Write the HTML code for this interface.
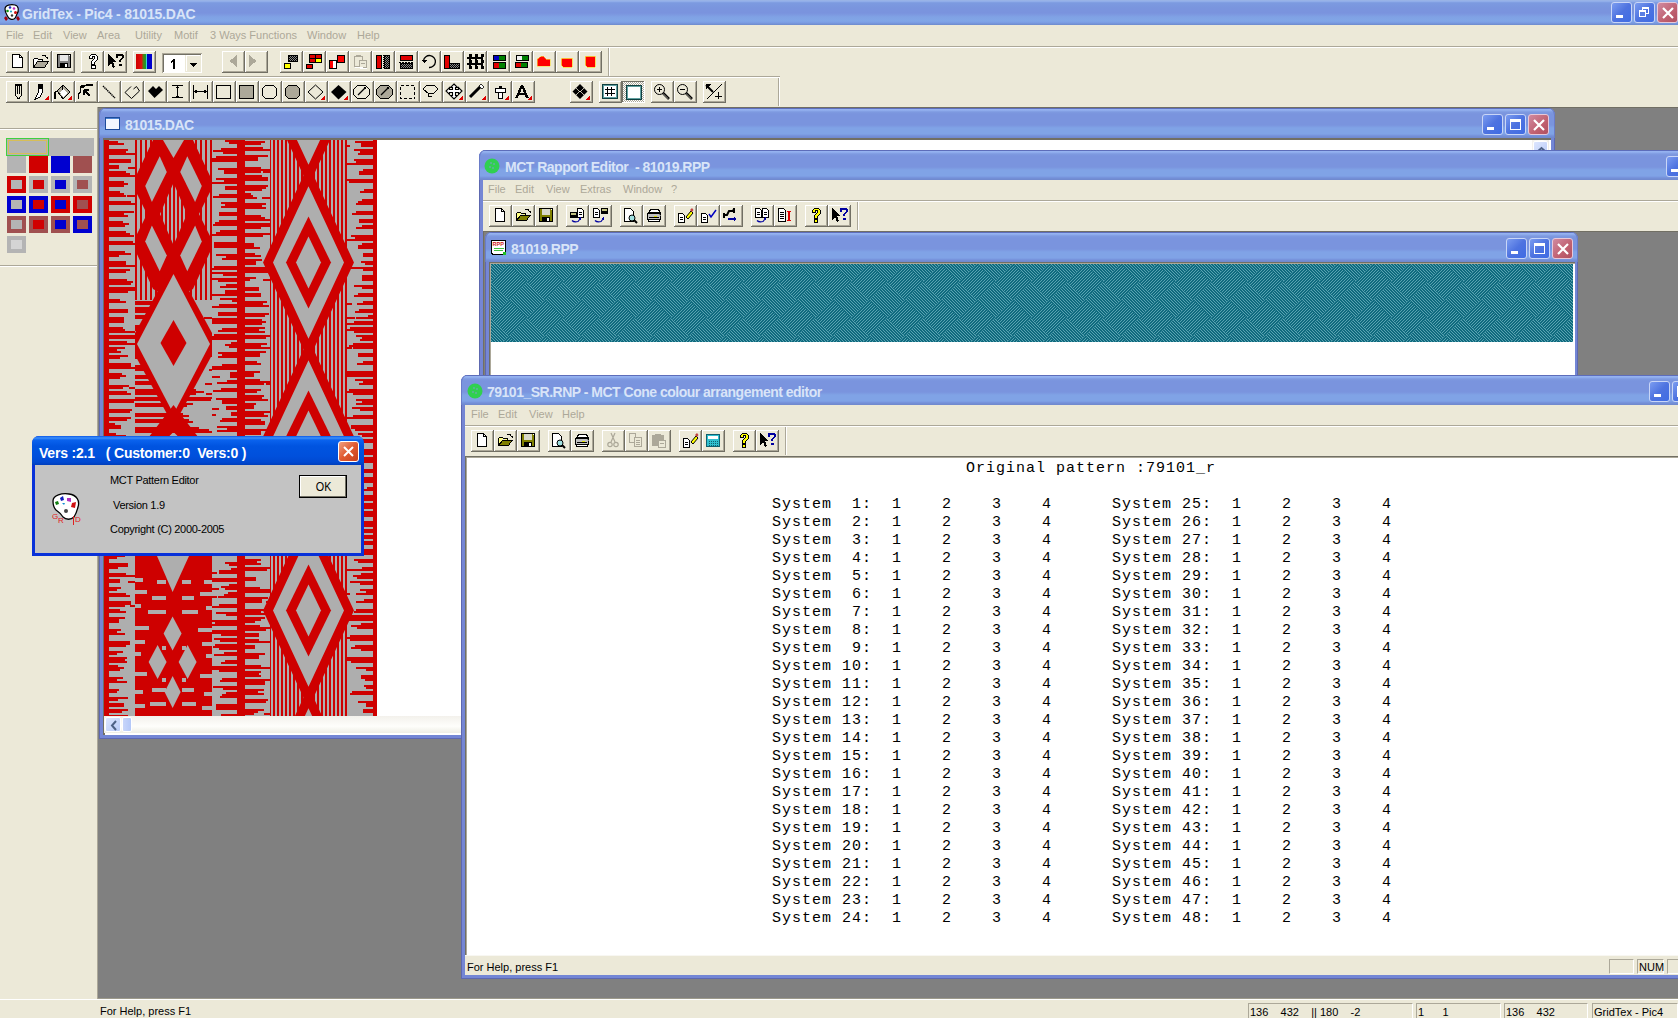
<!DOCTYPE html><html><head><meta charset="utf-8"><style>
*{box-sizing:border-box;margin:0;padding:0}
html,body{width:1678px;height:1018px;overflow:hidden;background:#ECE9D8;font-family:"Liberation Sans",sans-serif;position:relative}
.a{position:absolute}
.tb{position:absolute;background:linear-gradient(#96B0E0 0px,#9BB6EE 1px,#86A4E4 2px,#7C9AE0 3px,#7A95DE 8px,#7A93DE 13px,#80A2E5 17px,#81A6E7 21px,#7A9BE2 23px,#7391D4 24px,#6E8CCE 25px)}
.ttl{position:absolute;color:#D8E4F8;font-weight:bold;font-size:14px;white-space:nowrap;letter-spacing:-0.2px}
.menu{position:absolute;color:#ACA899;font-size:11px;white-space:nowrap}
.xb{position:absolute;width:21px;height:21px;border-radius:3px;border:1px solid #C9D6F7;background:linear-gradient(135deg,#7B9CF0 0%,#4E73E0 50%,#3F6CE4 100%)}
.xb.cl{border-color:#E8C8D8;background:linear-gradient(135deg,#D08AA0 0%,#C06070 60%,#B05060 100%)}
.btn{position:absolute;width:23px;height:22px;background:#ECE9D8;border-top:1px solid #FFF;border-left:1px solid #FFF;border-right:1px solid #716F64;border-bottom:1px solid #716F64;box-shadow:inset -1px -1px 0 #ACA899}
.btn svg{position:absolute;left:3px;top:2px}
.sep{position:absolute;height:2px;border-top:1px solid #ACA899;border-bottom:1px solid #FFF}
.vsep{position:absolute;width:2px;border-left:1px solid #ACA899;border-right:1px solid #FFF}
.mono{position:absolute;font-family:"Liberation Mono",monospace;font-size:15px;white-space:pre;color:#000;letter-spacing:1px;line-height:18px}
.st{position:absolute;font-size:11px;color:#000;white-space:nowrap}
.cell{position:absolute;border-top:1px solid #ACA899;border-left:1px solid #ACA899;border-right:1px solid #FFF;border-bottom:1px solid #FFF}
.frame{position:absolute;background:#7386D8}
</style></head><body>
<div class="tb" style="left:0;top:0;width:1678px;height:25px"></div>
<div class="ttl" style="left:22px;top:6px">GridTex - Pic4 - 81015.DAC</div>
<div class="xb" style="left:1611px;top:2px"><div class="a" style="left:4px;top:12px;width:7px;height:3px;background:#fff"></div></div>
<div class="xb" style="left:1634px;top:2px"><div class="a" style="left:7px;top:4px;width:7px;height:7px;border:1px solid #fff;border-top-width:2px"></div><div class="a" style="left:4px;top:7px;width:7px;height:7px;border:1px solid #fff;border-top-width:2px;background:#5A7FE4"></div></div>
<div class="xb cl" style="left:1657px;top:2px"><svg class="a" style="left:3px;top:3px" width="14" height="14"><path d="M2 2L12 12M12 2L2 12" stroke="#fff" stroke-width="2.2"/></svg></div>
<div class="menu" style="left:6px;top:29px">File</div>
<div class="menu" style="left:33px;top:29px">Edit</div>
<div class="menu" style="left:63px;top:29px">View</div>
<div class="menu" style="left:97px;top:29px">Area</div>
<div class="menu" style="left:135px;top:29px">Utility</div>
<div class="menu" style="left:174px;top:29px">Motif</div>
<div class="menu" style="left:210px;top:29px">3 Ways Functions</div>
<div class="menu" style="left:307px;top:29px">Window</div>
<div class="menu" style="left:357px;top:29px">Help</div>
<div class="sep" style="left:0;top:46px;width:1678px"></div>
<div class="sep" style="left:0;top:76px;width:780px"></div>
<div class="vsep" style="left:608px;top:48px;height:28px"></div>
<div class="vsep" style="left:778px;top:78px;height:28px"></div>
<svg class="a" style="left:0;top:0" width="800" height="108" shape-rendering="crispEdges">
<defs><pattern id="chk" width="2" height="2" patternUnits="userSpaceOnUse"><rect width="2" height="2" fill="#000"/><rect width="1" height="1" fill="#888"/><rect x="1" y="1" width="1" height="1" fill="#888"/></pattern><pattern id="chk2" width="2" height="2" patternUnits="userSpaceOnUse"><rect width="2" height="2" fill="#fff"/><rect width="1" height="1" fill="#ACA899"/><rect x="1" y="1" width="1" height="1" fill="#ACA899"/></pattern></defs>
<rect x="6" y="51" width="23" height="22" fill="#716F64"/><rect x="6" y="51" width="22" height="21" fill="#FFF"/><rect x="7" y="52" width="21" height="20" fill="#ACA899"/><rect x="7" y="52" width="20" height="19" fill="#ECE9D8"/>
<rect x="29" y="51" width="23" height="22" fill="#716F64"/><rect x="29" y="51" width="22" height="21" fill="#FFF"/><rect x="30" y="52" width="21" height="20" fill="#ACA899"/><rect x="30" y="52" width="20" height="19" fill="#ECE9D8"/>
<rect x="52" y="51" width="23" height="22" fill="#716F64"/><rect x="52" y="51" width="22" height="21" fill="#FFF"/><rect x="53" y="52" width="21" height="20" fill="#ACA899"/><rect x="53" y="52" width="20" height="19" fill="#ECE9D8"/>
<rect x="81" y="51" width="23" height="22" fill="#716F64"/><rect x="81" y="51" width="22" height="21" fill="#FFF"/><rect x="82" y="52" width="21" height="20" fill="#ACA899"/><rect x="82" y="52" width="20" height="19" fill="#ECE9D8"/>
<rect x="104" y="51" width="23" height="22" fill="#716F64"/><rect x="104" y="51" width="22" height="21" fill="#FFF"/><rect x="105" y="52" width="21" height="20" fill="#ACA899"/><rect x="105" y="52" width="20" height="19" fill="#ECE9D8"/>
<rect x="133" y="51" width="23" height="22" fill="#716F64"/><rect x="133" y="51" width="22" height="21" fill="#FFF"/><rect x="134" y="52" width="21" height="20" fill="#ACA899"/><rect x="134" y="52" width="20" height="19" fill="#ECE9D8"/>
<rect x="222" y="51" width="23" height="22" fill="#716F64"/><rect x="222" y="51" width="22" height="21" fill="#FFF"/><rect x="223" y="52" width="21" height="20" fill="#ACA899"/><rect x="223" y="52" width="20" height="19" fill="#ECE9D8"/>
<rect x="245" y="51" width="23" height="22" fill="#716F64"/><rect x="245" y="51" width="22" height="21" fill="#FFF"/><rect x="246" y="52" width="21" height="20" fill="#ACA899"/><rect x="246" y="52" width="20" height="19" fill="#ECE9D8"/>
<rect x="280" y="51" width="23" height="22" fill="#716F64"/><rect x="280" y="51" width="22" height="21" fill="#FFF"/><rect x="281" y="52" width="21" height="20" fill="#ACA899"/><rect x="281" y="52" width="20" height="19" fill="#ECE9D8"/>
<rect x="303" y="51" width="23" height="22" fill="#716F64"/><rect x="303" y="51" width="22" height="21" fill="#FFF"/><rect x="304" y="52" width="21" height="20" fill="#ACA899"/><rect x="304" y="52" width="20" height="19" fill="#ECE9D8"/>
<rect x="326" y="51" width="23" height="22" fill="#716F64"/><rect x="326" y="51" width="22" height="21" fill="#FFF"/><rect x="327" y="52" width="21" height="20" fill="#ACA899"/><rect x="327" y="52" width="20" height="19" fill="#ECE9D8"/>
<rect x="349" y="51" width="23" height="22" fill="#716F64"/><rect x="349" y="51" width="22" height="21" fill="#FFF"/><rect x="350" y="52" width="21" height="20" fill="#ACA899"/><rect x="350" y="52" width="20" height="19" fill="#ECE9D8"/>
<rect x="372" y="51" width="23" height="22" fill="#716F64"/><rect x="372" y="51" width="22" height="21" fill="#FFF"/><rect x="373" y="52" width="21" height="20" fill="#ACA899"/><rect x="373" y="52" width="20" height="19" fill="#ECE9D8"/>
<rect x="395" y="51" width="23" height="22" fill="#716F64"/><rect x="395" y="51" width="22" height="21" fill="#FFF"/><rect x="396" y="52" width="21" height="20" fill="#ACA899"/><rect x="396" y="52" width="20" height="19" fill="#ECE9D8"/>
<rect x="418" y="51" width="23" height="22" fill="#716F64"/><rect x="418" y="51" width="22" height="21" fill="#FFF"/><rect x="419" y="52" width="21" height="20" fill="#ACA899"/><rect x="419" y="52" width="20" height="19" fill="#ECE9D8"/>
<rect x="441" y="51" width="23" height="22" fill="#716F64"/><rect x="441" y="51" width="22" height="21" fill="#FFF"/><rect x="442" y="52" width="21" height="20" fill="#ACA899"/><rect x="442" y="52" width="20" height="19" fill="#ECE9D8"/>
<rect x="464" y="51" width="23" height="22" fill="#716F64"/><rect x="464" y="51" width="22" height="21" fill="#FFF"/><rect x="465" y="52" width="21" height="20" fill="#ACA899"/><rect x="465" y="52" width="20" height="19" fill="#ECE9D8"/>
<rect x="487" y="51" width="23" height="22" fill="#716F64"/><rect x="487" y="51" width="22" height="21" fill="#FFF"/><rect x="488" y="52" width="21" height="20" fill="#ACA899"/><rect x="488" y="52" width="20" height="19" fill="#ECE9D8"/>
<rect x="510" y="51" width="23" height="22" fill="#716F64"/><rect x="510" y="51" width="22" height="21" fill="#FFF"/><rect x="511" y="52" width="21" height="20" fill="#ACA899"/><rect x="511" y="52" width="20" height="19" fill="#ECE9D8"/>
<rect x="533" y="51" width="23" height="22" fill="#716F64"/><rect x="533" y="51" width="22" height="21" fill="#FFF"/><rect x="534" y="52" width="21" height="20" fill="#ACA899"/><rect x="534" y="52" width="20" height="19" fill="#ECE9D8"/>
<rect x="556" y="51" width="23" height="22" fill="#716F64"/><rect x="556" y="51" width="22" height="21" fill="#FFF"/><rect x="557" y="52" width="21" height="20" fill="#ACA899"/><rect x="557" y="52" width="20" height="19" fill="#ECE9D8"/>
<rect x="579" y="51" width="23" height="22" fill="#716F64"/><rect x="579" y="51" width="22" height="21" fill="#FFF"/><rect x="580" y="52" width="21" height="20" fill="#ACA899"/><rect x="580" y="52" width="20" height="19" fill="#ECE9D8"/>
<rect x="6" y="81" width="23" height="22" fill="#716F64"/><rect x="6" y="81" width="22" height="21" fill="#FFF"/><rect x="7" y="82" width="21" height="20" fill="#ACA899"/><rect x="7" y="82" width="20" height="19" fill="#ECE9D8"/>
<rect x="29" y="81" width="23" height="22" fill="#716F64"/><rect x="29" y="81" width="22" height="21" fill="#FFF"/><rect x="30" y="82" width="21" height="20" fill="#ACA899"/><rect x="30" y="82" width="20" height="19" fill="#ECE9D8"/>
<rect x="52" y="81" width="23" height="22" fill="#716F64"/><rect x="52" y="81" width="22" height="21" fill="#FFF"/><rect x="53" y="82" width="21" height="20" fill="#ACA899"/><rect x="53" y="82" width="20" height="19" fill="#ECE9D8"/>
<rect x="75" y="81" width="23" height="22" fill="#716F64"/><rect x="75" y="81" width="22" height="21" fill="#FFF"/><rect x="76" y="82" width="21" height="20" fill="#ACA899"/><rect x="76" y="82" width="20" height="19" fill="#ECE9D8"/>
<rect x="98" y="81" width="23" height="22" fill="#716F64"/><rect x="98" y="81" width="22" height="21" fill="#FFF"/><rect x="99" y="82" width="21" height="20" fill="#ACA899"/><rect x="99" y="82" width="20" height="19" fill="#ECE9D8"/>
<rect x="121" y="81" width="23" height="22" fill="#716F64"/><rect x="121" y="81" width="22" height="21" fill="#FFF"/><rect x="122" y="82" width="21" height="20" fill="#ACA899"/><rect x="122" y="82" width="20" height="19" fill="#ECE9D8"/>
<rect x="144" y="81" width="23" height="22" fill="#716F64"/><rect x="144" y="81" width="22" height="21" fill="#FFF"/><rect x="145" y="82" width="21" height="20" fill="#ACA899"/><rect x="145" y="82" width="20" height="19" fill="#ECE9D8"/>
<rect x="167" y="81" width="23" height="22" fill="#716F64"/><rect x="167" y="81" width="22" height="21" fill="#FFF"/><rect x="168" y="82" width="21" height="20" fill="#ACA899"/><rect x="168" y="82" width="20" height="19" fill="#ECE9D8"/>
<rect x="190" y="81" width="23" height="22" fill="#716F64"/><rect x="190" y="81" width="22" height="21" fill="#FFF"/><rect x="191" y="82" width="21" height="20" fill="#ACA899"/><rect x="191" y="82" width="20" height="19" fill="#ECE9D8"/>
<rect x="213" y="81" width="23" height="22" fill="#716F64"/><rect x="213" y="81" width="22" height="21" fill="#FFF"/><rect x="214" y="82" width="21" height="20" fill="#ACA899"/><rect x="214" y="82" width="20" height="19" fill="#ECE9D8"/>
<rect x="236" y="81" width="23" height="22" fill="#716F64"/><rect x="236" y="81" width="22" height="21" fill="#FFF"/><rect x="237" y="82" width="21" height="20" fill="#ACA899"/><rect x="237" y="82" width="20" height="19" fill="#ECE9D8"/>
<rect x="259" y="81" width="23" height="22" fill="#716F64"/><rect x="259" y="81" width="22" height="21" fill="#FFF"/><rect x="260" y="82" width="21" height="20" fill="#ACA899"/><rect x="260" y="82" width="20" height="19" fill="#ECE9D8"/>
<rect x="282" y="81" width="23" height="22" fill="#716F64"/><rect x="282" y="81" width="22" height="21" fill="#FFF"/><rect x="283" y="82" width="21" height="20" fill="#ACA899"/><rect x="283" y="82" width="20" height="19" fill="#ECE9D8"/>
<rect x="305" y="81" width="23" height="22" fill="#716F64"/><rect x="305" y="81" width="22" height="21" fill="#FFF"/><rect x="306" y="82" width="21" height="20" fill="#ACA899"/><rect x="306" y="82" width="20" height="19" fill="#ECE9D8"/>
<rect x="328" y="81" width="23" height="22" fill="#716F64"/><rect x="328" y="81" width="22" height="21" fill="#FFF"/><rect x="329" y="82" width="21" height="20" fill="#ACA899"/><rect x="329" y="82" width="20" height="19" fill="#ECE9D8"/>
<rect x="351" y="81" width="23" height="22" fill="#716F64"/><rect x="351" y="81" width="22" height="21" fill="#FFF"/><rect x="352" y="82" width="21" height="20" fill="#ACA899"/><rect x="352" y="82" width="20" height="19" fill="#ECE9D8"/>
<rect x="374" y="81" width="23" height="22" fill="#716F64"/><rect x="374" y="81" width="22" height="21" fill="#FFF"/><rect x="375" y="82" width="21" height="20" fill="#ACA899"/><rect x="375" y="82" width="20" height="19" fill="#ECE9D8"/>
<rect x="397" y="81" width="23" height="22" fill="#716F64"/><rect x="397" y="81" width="22" height="21" fill="#FFF"/><rect x="398" y="82" width="21" height="20" fill="#ACA899"/><rect x="398" y="82" width="20" height="19" fill="#ECE9D8"/>
<rect x="420" y="81" width="23" height="22" fill="#716F64"/><rect x="420" y="81" width="22" height="21" fill="#FFF"/><rect x="421" y="82" width="21" height="20" fill="#ACA899"/><rect x="421" y="82" width="20" height="19" fill="#ECE9D8"/>
<rect x="443" y="81" width="23" height="22" fill="#716F64"/><rect x="443" y="81" width="22" height="21" fill="#FFF"/><rect x="444" y="82" width="21" height="20" fill="#ACA899"/><rect x="444" y="82" width="20" height="19" fill="#ECE9D8"/>
<rect x="466" y="81" width="23" height="22" fill="#716F64"/><rect x="466" y="81" width="22" height="21" fill="#FFF"/><rect x="467" y="82" width="21" height="20" fill="#ACA899"/><rect x="467" y="82" width="20" height="19" fill="#ECE9D8"/>
<rect x="489" y="81" width="23" height="22" fill="#716F64"/><rect x="489" y="81" width="22" height="21" fill="#FFF"/><rect x="490" y="82" width="21" height="20" fill="#ACA899"/><rect x="490" y="82" width="20" height="19" fill="#ECE9D8"/>
<rect x="512" y="81" width="23" height="22" fill="#716F64"/><rect x="512" y="81" width="22" height="21" fill="#FFF"/><rect x="513" y="82" width="21" height="20" fill="#ACA899"/><rect x="513" y="82" width="20" height="19" fill="#ECE9D8"/>
<rect x="570" y="81" width="23" height="22" fill="#716F64"/><rect x="570" y="81" width="22" height="21" fill="#FFF"/><rect x="571" y="82" width="21" height="20" fill="#ACA899"/><rect x="571" y="82" width="20" height="19" fill="#ECE9D8"/>
<rect x="599" y="81" width="23" height="22" fill="#716F64"/><rect x="599" y="81" width="22" height="21" fill="#FFF"/><rect x="600" y="82" width="21" height="20" fill="#ACA899"/><rect x="600" y="82" width="20" height="19" fill="#ECE9D8"/>
<rect x="651" y="81" width="23" height="22" fill="#716F64"/><rect x="651" y="81" width="22" height="21" fill="#FFF"/><rect x="652" y="82" width="21" height="20" fill="#ACA899"/><rect x="652" y="82" width="20" height="19" fill="#ECE9D8"/>
<rect x="674" y="81" width="23" height="22" fill="#716F64"/><rect x="674" y="81" width="22" height="21" fill="#FFF"/><rect x="675" y="82" width="21" height="20" fill="#ACA899"/><rect x="675" y="82" width="20" height="19" fill="#ECE9D8"/>
<rect x="703" y="81" width="23" height="22" fill="#716F64"/><rect x="703" y="81" width="22" height="21" fill="#FFF"/><rect x="704" y="82" width="21" height="20" fill="#ACA899"/><rect x="704" y="82" width="20" height="19" fill="#ECE9D8"/>
<rect x="622" y="81" width="23" height="22" fill="#FFF"/><rect x="622" y="81" width="22" height="21" fill="#716F64"/><rect x="623" y="82" width="21" height="20" fill="url(#chk2)"/>
<path d="M12.5 54.5H19.5L22.5 57.5V67.5H12.5Z" fill="#fff" stroke="#000"/><path d="M19.5 54.5V57.5H22.5" fill="none" stroke="#000"/>
<path d="M33.5 58.5H37.5L38.5 59.5H42.5V61.5" fill="#fff" stroke="#000"/><path d="M33.5 58.5V67.5H44.5L48.5 61.5H37.5L33.5 67.5" fill="#ACA899" stroke="#000"/><path d="M34 59H37V61L34 65Z" fill="#fff"/><path d="M41.5 56.5C42.5 54.5 45.5 54.5 46.5 57.5" fill="none" stroke="#000"/><path d="M45 57H48V59Z" fill="#000"/>
<rect x="57" y="54" width="14" height="14" fill="#000"/><rect x="58" y="55" width="12" height="12" fill="#808080"/><rect x="60" y="55" width="8" height="6" fill="#E8E8E8"/><rect x="60" y="63" width="8" height="4" fill="#000"/><rect x="65" y="64" width="2" height="3" fill="#fff"/><rect x="69" y="55" width="1" height="1" fill="#fff"/>
<path d="M89.5 58.5V56.5L91.5 54.5H95.5L97.5 56.5V59.5L94.5 62.5V64.5H91.5V61.5L94.5 58.5V56.5H92.5V58.5Z" fill="#fff" stroke="#000"/><rect x="91" y="65" width="4" height="3" fill="#fff" stroke="#000" stroke-width="1"/>
<path d="M108 54V66L111 63L113 68L115 67L113 62H117Z" fill="#000"/><path d="M116.5 57.5V55.5L118 54.5H121L122.5 55.5V58L120 60.5V62" fill="none" stroke="#000" stroke-width="2"/><rect x="119" y="64" width="3" height="2" fill="#000"/>
<defs><linearGradient id="rgb" x1="0" x2="1"><stop offset="0" stop-color="#D00000"/><stop offset="0.35" stop-color="#E01010"/><stop offset="0.45" stop-color="#5A7A10"/><stop offset="0.62" stop-color="#10A030"/><stop offset="0.66" stop-color="#40E0E0"/><stop offset="0.7" stop-color="#0000C0"/><stop offset="1" stop-color="#0000D0"/></linearGradient></defs><rect x="136" y="54" width="16" height="15" fill="url(#rgb)" shape-rendering="auto"/>
<rect x="162" y="53" width="40" height="20" fill="#ACA899"/><rect x="163" y="54" width="39" height="19" fill="#FFF"/><rect x="163" y="54" width="38" height="18" fill="#716F64"/><rect x="164" y="55" width="37" height="17" fill="#ECE9D8"/><rect x="164" y="55" width="21" height="17" fill="#FFF"/><rect x="186" y="55" width="15" height="17" fill="#ECE9D8"/><rect x="186" y="55" width="14" height="16" fill="#FFF"/><rect x="187" y="56" width="13" height="15" fill="#ECE9D8"/><path d="M189 63H197L193 67Z" fill="#000"/>
<path d="M171 61L174 59H175V69H173V62L171 63Z" fill="#000"/>
<path d="M229.5 61L237 55V67Z" fill="#ACA899"/><path d="M249 55V67L256.5 61Z" fill="#ACA899"/>
<rect x="284" y="63" width="7" height="6" fill="#000"/><rect x="285" y="64" width="5" height="4" fill="#FFFF00"/><rect x="288" y="55" width="10" height="7" fill="#000"/><rect x="289" y="56" width="8" height="5" fill="url(#chk)"/>
<rect x="309" y="54" width="13" height="9" fill="#000"/><rect x="310" y="55" width="5" height="3" fill="#E00000"/><rect x="316" y="55" width="5" height="3" fill="#E00000"/><rect x="310" y="59" width="5" height="3" fill="#E00000"/><rect x="316" y="59" width="5" height="3" fill="#FFFF00"/><rect x="306" y="64" width="7" height="5" fill="#000"/><rect x="307" y="65" width="5" height="3" fill="#E00000"/>
<rect x="337" y="55" width="8" height="8" fill="#000"/><rect x="338" y="56" width="6" height="6" fill="#FF0000"/><rect x="329" y="60" width="8" height="9" fill="#000"/><rect x="330" y="61" width="3" height="7" fill="#FF0000"/><rect x="333" y="61" width="3" height="7" fill="#fff"/>
<path d="M354.5 56.5H362.5V66.5H354.5Z" fill="none" stroke="#ACA899"/><rect x="356" y="55" width="5" height="2" fill="#ACA899"/><path d="M359.5 60.5H366.5V67.5H359.5Z" fill="#ECE9D8" stroke="#ACA899"/><rect x="361" y="63" width="4" height="1" fill="#ACA899"/><path d="M355 67H363M360 68H367" stroke="#fff"/>
<rect x="376" y="55" width="6" height="14" fill="#000"/><rect x="377" y="56" width="4" height="12" fill="#E00000"/><path d="M383 55V69" stroke="#000" stroke-dasharray="1 1"/><rect x="384" y="55" width="6" height="14" fill="#000"/><rect x="385" y="56" width="4" height="12" fill="url(#chk)"/>
<rect x="400" y="55" width="13" height="6" fill="#000"/><rect x="401" y="56" width="11" height="4" fill="#E00000"/><path d="M399 62H413" stroke="#000" stroke-dasharray="2 1"/><rect x="400" y="63" width="13" height="6" fill="#000"/><rect x="401" y="64" width="11" height="4" fill="url(#chk)"/>
<path d="M423.5 60.5A6 6 0 1 1 429 67.5" fill="none" stroke="#000" stroke-width="1.3" shape-rendering="auto"/><path d="M421 60H427L424 63Z" fill="#000"/>
<rect x="444" y="55" width="6" height="14" fill="#000"/><rect x="445" y="56" width="4" height="12" fill="#E00000"/><rect x="449" y="63" width="11" height="6" fill="#000"/><rect x="450" y="64" width="9" height="4" fill="url(#chk)"/>
<path d="M467 58H483M467 64H483M470 55V69M476 55V69M482 55V69" stroke="#000" stroke-width="2"/>
<rect x="468.5" y="53.5" width="3" height="3" fill="#000"/>
<rect x="468.5" y="59.5" width="3" height="3" fill="#000"/>
<rect x="468.5" y="65.5" width="3" height="3" fill="#000"/>
<rect x="474.5" y="53.5" width="3" height="3" fill="#000"/>
<rect x="474.5" y="59.5" width="3" height="3" fill="#000"/>
<rect x="474.5" y="65.5" width="3" height="3" fill="#000"/>
<rect x="480.5" y="53.5" width="3" height="3" fill="#000"/>
<rect x="480.5" y="59.5" width="3" height="3" fill="#000"/>
<rect x="480.5" y="65.5" width="3" height="3" fill="#000"/>
<path d="M467 56H484V68H467Z" fill="none"/>
<rect x="493" y="55" width="13" height="6" fill="#000"/><rect x="494" y="56" width="5" height="4" fill="#0000C0"/><rect x="499" y="56" width="6" height="4" fill="#008000"/><rect x="493" y="62" width="13" height="7" fill="#000"/><rect x="494" y="63" width="5" height="5" fill="#E00000"/><rect x="499" y="63" width="6" height="5" fill="#008000"/>
<rect x="516" y="55" width="13" height="6" fill="#000"/><rect x="517" y="56" width="5" height="4" fill="#F0F0F0"/><rect x="522" y="56" width="6" height="4" fill="#008000"/><rect x="515" y="62" width="13" height="6" fill="#000"/><rect x="516" y="63" width="5" height="4" fill="#E00000"/><rect x="521" y="63" width="6" height="4" fill="#008000"/>
<path d="M537 59L542 56H543L546 59H550V66H537Z" fill="#FF0000" stroke="#F8E040" stroke-width="0.6"/>
<path d="M562 58H572V67H563L561 65V61Z" fill="#FF0000" stroke="#F8E040" stroke-width="0.8"/>
<path d="M585 56H595V67H587L585 65Z" fill="#FF0000" stroke="#F8E040" stroke-width="0.8"/>
<path d="M15 84H22V95L19 99H18L15 95Z" fill="#ECE9D8" stroke="none"/><path d="M15.5 84V95.5L18.5 99M21.5 84V95.5L18.5 99M17.5 84V94M19.5 84V94" fill="none" stroke="#000"/><rect x="16" y="84" width="5" height="2" fill="#000"/>
<path d="M38.5 84.5H42.5V92L40 97L36 99H35L37 95L38.5 92Z" fill="#fff" stroke="#000"/><rect x="39" y="84" width="3" height="5" fill="#000"/><path d="M49 95V100H44Z" fill="#E00000"/>
<path d="M62.5 84.5V90M57 91L63 85L70 92L63 99Z" fill="#ACA899" stroke="#000"/><path d="M60 92L63 89L67 93L63 97Z" fill="#fff"/><path d="M56 91L55 93V99" fill="none" stroke="#000" stroke-width="2"/><path d="M72 95V100H67Z" fill="#E00000"/>
<path d="M78.5 99V94L80.5 92V86.5H83.5L86 85H93" fill="none" stroke="#000" stroke-width="1.3"/><rect x="81" y="85" width="3" height="3" fill="#000"/><path d="M84 90L90 96M84 90H89M84 90V95" stroke="#000" stroke-width="2" fill="none"/>
<path d="M103 86L115 98" stroke="#000" stroke-width="1.4" stroke-dasharray="1.4 0.6" shape-rendering="auto"/>
<path d="M131 86.5L125 92.5L131.5 98.5L139.5 91L136.5 86.5L133.5 89" fill="none" stroke="#000" shape-rendering="auto"/>
<path d="M148 91L153 86L156 89L159 86L163 90L154.5 98Z" fill="#000" shape-rendering="auto"/>
<path d="M172 85.5H183M172 97.5H183M177.5 86V97" stroke="#000" stroke-width="1"/><path d="M176 87H179M176 96H179" stroke="#000"/>
<path d="M193.5 85V99M207.5 85V99M194 91.5H207" stroke="#000"/><rect x="195" y="90" width="2" height="3" fill="#000"/><rect x="204" y="90" width="2" height="3" fill="#000"/>
<rect x="216.5" y="85.5" width="14" height="13" fill="none" stroke="#000"/>
<rect x="239.5" y="85.5" width="14" height="13" fill="#ACA899" stroke="#000"/>
<path d="M265.5 85.5H273.5L276.5 88.5V95.5L273.5 98.5H265.5L262.5 95.5V88.5Z" fill="none" stroke="#000"/>
<path d="M288.5 85.5H296.5L299.5 88.5V95.5L296.5 98.5H288.5L285.5 95.5V88.5Z" fill="#ACA899" stroke="#000"/>
<path d="M315.5 85L323 92L315.5 99L308 92Z" fill="none" stroke="#000" shape-rendering="auto"/><path d="M325 95V100H320Z" fill="#E00000"/>
<path d="M338.5 85L346.5 92L338.5 99.5L331 92Z" fill="#000" shape-rendering="auto"/><path d="M348 95V100H343Z" fill="#E00000"/>
<path d="M357.5 85.5H365.5L369.5 89.5V94.5L365.5 98.5H357.5L353.5 94.5V89.5Z" fill="none" stroke="#000"/><path d="M358 95L365 88" stroke="#000" stroke-width="1.3" shape-rendering="auto"/><path d="M363 87H366V90Z" fill="#000"/>
<path d="M380.5 85.5H388.5L392.5 89.5V94.5L388.5 98.5H380.5L376.5 94.5V89.5Z" fill="#ACA899" stroke="#000"/><path d="M381 95L388 88" stroke="#000" stroke-width="1.3" shape-rendering="auto"/><path d="M386 87H389V90Z" fill="#000"/>
<rect x="400.5" y="85.5" width="14" height="13" fill="none" stroke="#000" stroke-dasharray="3 2"/>
<path d="M426.5 85.5H434.5L437.5 88.5V89.5L433.5 93.5H428.5L423.5 89.5V88.5Z" fill="none" stroke="#000"/><path d="M428.5 93V96.5H432" fill="none" stroke="#000"/>
<path d="M454 84L457.5 87.5H455.5V89.5H458.5V87.5L462 91L458.5 94.5V92.5H455.5V95.5H457.5L454 99L450.5 95.5H452.5V92.5H449.5V94.5L446 91L449.5 87.5V89.5H452.5V87.5H450.5Z" fill="#fff" stroke="#000" stroke-width="1.1" shape-rendering="auto"/><path d="M463 95V100H458Z" fill="#E00000"/>
<path d="M470 97L481 86" stroke="#000" stroke-width="3" shape-rendering="auto"/><path d="M479 86L481 84L484 87L482 89Z" fill="#fff" stroke="#000" stroke-width="0.8" shape-rendering="auto"/><path d="M486 95V100H481Z" fill="#E00000"/>
<rect x="495.5" y="88.5" width="10" height="4" fill="#fff" stroke="#000"/><rect x="498.5" y="92.5" width="4" height="6" fill="#fff" stroke="#000"/><rect x="499" y="86" width="3" height="2" fill="#000"/><path d="M509 95V100H504Z" fill="#E00000"/>
<path d="M515 98H518L519 95H525L526 98H529L523 85H521Z M520 93L522 88L524 93Z" fill="#000" fill-rule="evenodd"/><path d="M532 95V100H527Z" fill="#E00000"/>
<path d="M580 84L584 88L580 92L576 88Z M576 88L572.5 91.5L576 95L579.5 91.5Z M584 88L580.5 91.5L584 95L587.5 91.5Z M580 91L584 95L580 99L576 95Z" fill="#000" shape-rendering="auto"/><path d="M580 92L576 88M580 92L584 88M576 95L580 91M584 95L580 91" stroke="#ECE9D8" stroke-width="0.8" shape-rendering="auto"/><path d="M590 95V100H585Z" fill="#E00000"/>
<rect x="602" y="84" width="16" height="15" fill="#0F3F3F"/><rect x="603" y="85" width="14" height="13" fill="#60A0A0"/><rect x="604" y="86" width="12" height="11" fill="#fff"/><path d="M605 89.5H615M605 93.5H615M607.5 87V96M611.5 87V96" stroke="#000"/>
<rect x="626" y="85" width="16" height="15" fill="#0F3F3F"/><rect x="627" y="86" width="14" height="13" fill="#60A0A0"/><rect x="628" y="87" width="12" height="11" fill="#fff"/>
<circle cx="659.5" cy="89.5" r="5" fill="none" stroke="#000" shape-rendering="auto"/><path d="M663 93L669 99" stroke="#000" stroke-width="2.5" shape-rendering="auto"/><path d="M663.2 93.8L668.5 99" stroke="#ECE9D8" stroke-width="0.7" shape-rendering="auto"/>
<path d="M657 89.5H662" stroke="#000"/>
<path d="M659.5 87V92" stroke="#000"/>
<circle cx="682.5" cy="89.5" r="5" fill="none" stroke="#000" shape-rendering="auto"/><path d="M686 93L692 99" stroke="#000" stroke-width="2.5" shape-rendering="auto"/><path d="M686.2 93.8L691.5 99" stroke="#ECE9D8" stroke-width="0.7" shape-rendering="auto"/>
<path d="M680 89.5H685" stroke="#000"/>
<path d="M707 99L722 84" stroke="#000" shape-rendering="auto"/><path d="M715 96H722M718.5 92V99" stroke="#000"/><path d="M706 85L713 92" stroke="#000" stroke-width="2" shape-rendering="auto"/><path d="M706 84H711L706 89Z" fill="#000"/>
</svg>
<div class="a" style="left:98px;top:107px;width:1580px;height:892px;background:#808080;"></div>
<div class="a" style="left:97px;top:107px;width:1px;height:892px;background:#ACA899"></div>
<div class="a" style="left:98px;top:107px;width:1580px;height:1px;background:#716F64"></div>
<div class="sep" style="left:0;top:128px;width:97px"></div>
<div class="sep" style="left:0;top:265px;width:97px"></div>
<div class="a" style="left:0;top:999px;width:1678px;height:1px;background:#FFF"></div>
<div class="a" style="left:98px;top:998px;width:1580px;height:1px;background:#9D9A8C"></div>
<div class="st" style="left:100px;top:1005px">For Help, press F1</div>
<div class="cell" style="left:1248px;top:1003px;width:165px;height:16px"><div class="st" style="left:1px;top:2px">136&nbsp;&nbsp;&nbsp;&nbsp;432&nbsp;&nbsp;&nbsp;&nbsp;||&nbsp;180&nbsp;&nbsp;&nbsp;&nbsp;-2</div></div>
<div class="cell" style="left:1416px;top:1003px;width:85px;height:16px"><div class="st" style="left:1px;top:2px">1&nbsp;&nbsp;&nbsp;&nbsp;&nbsp;&nbsp;1</div></div>
<div class="cell" style="left:1504px;top:1003px;width:84px;height:16px"><div class="st" style="left:1px;top:2px">136&nbsp;&nbsp;&nbsp;&nbsp;432</div></div>
<div class="cell" style="left:1592px;top:1003px;width:86px;height:16px"><div class="st" style="left:1px;top:2px">GridTex - Pic4</div></div>
<div class="a" style="left:99px;top:108px;width:1456px;height:631px;background:#7386D5;border-radius:7px 7px 0 0;box-shadow:inset 1px 0 0 #5D68B0,inset -1px 0 0 #5D68B0,inset 0 -1px 0 #5D68B0,inset 3px 0 0 #7686D4"></div>
<div class="a" style="left:99px;top:108px;width:1456px;height:30px;background:linear-gradient(#5D6DBA 0px,#5D6DBA 1px,#95B2F0 1px,#95B2F0 2px,#88A5E8 3px,#7E9AE0 4px,#7A94DE 6px,#7A94DE 17px,#80A3E6 20px,#80A3E6 26px,#7A98E0 27px,#7490D8 28px,#7088CC 30px);border-radius:7px 7px 0 0;box-shadow:inset 1px 0 0 #6A7CC8,inset -1px 0 0 #6A7CC8"></div>
<div class="ttl" style="left:125px;top:117px;letter-spacing:-0.5px">81015.DAC</div>
<div class="xb" style="left:1482px;top:114px"><div class="a" style="left:4px;top:12px;width:7px;height:3px;background:#fff"></div></div>
<div class="xb" style="left:1505px;top:114px"><div class="a" style="left:4px;top:4px;width:11px;height:11px;border:1px solid #fff;border-top-width:3px"></div></div>
<div class="xb cl" style="left:1528px;top:114px"><svg class="a" style="left:3px;top:3px" width="14" height="14"><path d="M2 2L12 12M12 2L2 12" stroke="#fff" stroke-width="2.2"/></svg></div>
<div class="a" style="left:103px;top:138px;width:1448px;height:597px;background:#FFFFFF;box-shadow:inset 2px 2px 0 #716F64"></div>
<svg class="a" style="left:104px;top:140px" width="273" height="576" viewBox="104 140 273 576" shape-rendering="crispEdges">
<defs><pattern id="vstr" width="5" height="4" patternUnits="userSpaceOnUse"><rect width="5" height="4" fill="#AEAEAE"/><rect width="2" height="4" fill="#CE0000"/></pattern><pattern id="vstr2" width="4" height="4" patternUnits="userSpaceOnUse" x="1"><rect width="4" height="4" fill="#AEAEAE"/><rect width="2" height="4" fill="#CE0000"/></pattern></defs>
<rect x="104" y="140" width="273" height="576" fill="#CE0000"/>
<rect x="109" y="140" width="26" height="576" fill="#AEAEAE"/><path d="M109 141h9v2h-9zM109 143h15v2h-15zM109 149h19v2h-19zM109 151h17v2h-17zM109 153h23v2h-23zM129 153h6v2h-6zM109 159h22v2h-22zM109 161h22v2h-22zM109 165h10v2h-10zM109 167h10v2h-10zM128 167h7v2h-7zM109 171h17v2h-17zM109 173h21v2h-21zM109 175h26v2h-26zM131 175h4v2h-4zM109 181h15v2h-15zM109 183h19v2h-19zM109 185h15v2h-15zM109 191h11v2h-11zM109 193h15v2h-15zM109 195h17v2h-17zM127 195h8v2h-8zM109 201h22v2h-22zM109 203h26v2h-26zM109 211h25v2h-25zM109 213h15v2h-15zM109 215h19v2h-19zM109 221h14v2h-14zM109 223h20v2h-20zM109 225h16v2h-16zM109 231h17v2h-17zM109 233h21v2h-21zM109 235h25v2h-25zM109 241h24v2h-24zM109 243h22v2h-22zM131 243h4v2h-4zM109 251h16v2h-16zM109 253h22v2h-22zM109 255h10v2h-10zM109 261h17v2h-17zM109 263h17v2h-17zM109 265h25v2h-25zM132 265h3v2h-3zM109 269h21v2h-21zM109 271h17v2h-17zM109 279h18v2h-18zM109 281h24v2h-24zM109 283h22v2h-22zM109 287h26v2h-26zM109 289h26v2h-26zM109 291h19v2h-19zM109 299h11v2h-11zM109 301h17v2h-17zM109 309h19v2h-19zM109 311h19v2h-19zM109 317h15v2h-15zM109 319h15v2h-15zM109 321h15v2h-15zM109 327h14v2h-14zM109 329h16v2h-16zM109 331h26v2h-26zM128 331h7v2h-7zM109 335h26v2h-26zM109 337h23v2h-23zM127 337h8v2h-8zM109 341h18v2h-18zM109 343h24v2h-24zM130 343h5v2h-5zM109 347h16v2h-16zM109 349h8v2h-8zM109 351h12v2h-12zM109 355h19v2h-19zM109 357h11v2h-11zM109 363h22v2h-22zM109 365h22v2h-22zM109 367h22v2h-22zM130 367h5v2h-5zM109 373h13v2h-13zM109 375h17v2h-17zM109 377h11v2h-11zM109 385h20v2h-20zM109 387h14v2h-14zM129 387h6v2h-6zM109 391h18v2h-18zM109 393h22v2h-22zM109 399h26v2h-26zM109 401h25v2h-25zM109 409h23v2h-23zM109 411h21v2h-21zM109 417h22v2h-22zM109 419h18v2h-18zM109 423h6v2h-6zM109 425h12v2h-12zM109 427h12v2h-12zM109 433h7v2h-7zM109 435h17v2h-17zM109 437h7v2h-7zM109 441h19v2h-19zM109 443h17v2h-17zM109 445h17v2h-17zM131 445h4v2h-4zM109 451h18v2h-18zM109 453h20v2h-20zM109 461h12v2h-12zM109 463h24v2h-24zM109 471h11v2h-11zM109 473h15v2h-15zM109 475h11v2h-11zM109 479h14v2h-14zM109 481h18v2h-18zM109 487h14v2h-14zM109 489h20v2h-20zM109 491h8v2h-8zM109 499h26v2h-26zM109 501h26v2h-26zM109 503h24v2h-24zM109 511h18v2h-18zM109 513h6v2h-6zM131 513h4v2h-4zM109 517h15v2h-15zM109 519h19v2h-19zM109 525h16v2h-16zM109 527h10v2h-10zM109 529h16v2h-16zM128 529h7v2h-7zM109 535h24v2h-24zM109 537h14v2h-14zM109 543h13v2h-13zM109 545h13v2h-13zM109 553h16v2h-16zM109 555h16v2h-16zM109 557h8v2h-8zM109 563h19v2h-19zM109 565h19v2h-19zM109 567h9v2h-9zM109 573h17v2h-17zM109 575h23v2h-23zM127 575h8v2h-8zM109 579h11v2h-11zM109 581h11v2h-11zM128 581h7v2h-7zM109 587h12v2h-12zM109 589h8v2h-8zM109 593h17v2h-17zM109 595h21v2h-21zM109 601h22v2h-22zM109 603h22v2h-22zM109 605h16v2h-16zM130 605h5v2h-5zM109 609h11v2h-11zM109 611h17v2h-17zM109 617h16v2h-16zM109 619h10v2h-10zM109 621h10v2h-10zM109 629h12v2h-12zM109 631h8v2h-8zM109 633h16v2h-16zM109 641h21v2h-21zM109 643h21v2h-21zM109 645h17v2h-17zM109 651h14v2h-14zM109 653h8v2h-8zM109 657h18v2h-18zM109 659h16v2h-16zM109 661h18v2h-18zM109 665h9v2h-9zM109 667h15v2h-15zM109 669h11v2h-11zM109 677h14v2h-14zM109 679h8v2h-8zM109 681h18v2h-18zM109 689h10v2h-10zM109 691h8v2h-8zM109 697h19v2h-19zM109 699h9v2h-9zM109 703h15v2h-15zM109 705h15v2h-15zM109 709h19v2h-19zM109 711h13v2h-13zM109 715h19v2h-19zM109 717h19v2h-19z" fill="#CE0000"/>
<rect x="212" y="140" width="25" height="576" fill="#AEAEAE"/><path d="M225 140h12v2h-12zM229 142h8v2h-8zM221 148h16v2h-16zM213 150h24v2h-24zM223 152h14v2h-14zM216 156h21v2h-21zM212 158h25v2h-25zM212 160h25v2h-25zM218 168h19v2h-19zM224 170h13v2h-13zM224 172h13v2h-13zM216 178h21v2h-21zM224 180h13v2h-13zM216 182h21v2h-21zM212 182h4v2h-4zM225 186h12v2h-12zM225 188h12v2h-12zM219 194h18v2h-18zM213 196h24v2h-24zM221 202h16v2h-16zM225 204h12v2h-12zM221 206h16v2h-16zM219 212h18v2h-18zM219 214h18v2h-18zM219 220h18v2h-18zM215 222h22v2h-22zM213 224h24v2h-24zM220 230h17v2h-17zM216 232h21v2h-21zM212 234h25v2h-25zM214 242h23v2h-23zM214 244h23v2h-23zM214 246h23v2h-23zM216 254h21v2h-21zM226 256h11v2h-11zM222 258h15v2h-15zM214 266h23v2h-23zM212 268h25v2h-25zM212 268h4v2h-4zM212 272h25v2h-25zM223 274h14v2h-14zM212 278h25v2h-25zM218 280h19v2h-19zM226 284h11v2h-11zM220 286h17v2h-17zM225 290h12v2h-12zM225 292h12v2h-12zM215 294h22v2h-22zM212 294h3v2h-3zM220 298h17v2h-17zM232 300h5v2h-5zM219 304h18v2h-18zM212 306h25v2h-25zM218 312h19v2h-19zM218 314h19v2h-19zM212 318h25v2h-25zM212 320h25v2h-25zM212 322h25v2h-25zM212 322h5v2h-5zM222 328h15v2h-15zM218 330h19v2h-19zM214 334h23v2h-23zM212 336h25v2h-25zM212 338h25v2h-25zM212 338h4v2h-4zM231 342h6v2h-6zM225 344h12v2h-12zM229 346h8v2h-8zM218 352h19v2h-19zM222 354h15v2h-15zM218 356h19v2h-19zM222 364h15v2h-15zM212 366h25v2h-25zM212 368h25v2h-25zM230 372h7v2h-7zM230 374h7v2h-7zM230 376h7v2h-7zM212 376h8v2h-8zM227 380h10v2h-10zM217 382h20v2h-20zM221 388h16v2h-16zM213 390h24v2h-24zM216 398h21v2h-21zM222 400h15v2h-15zM222 402h15v2h-15zM226 406h11v2h-11zM226 408h11v2h-11zM212 408h7v2h-7zM231 412h6v2h-6zM231 414h6v2h-6zM212 414h4v2h-4zM222 418h15v2h-15zM220 420h17v2h-17zM217 426h20v2h-20zM227 428h10v2h-10zM217 430h20v2h-20zM213 436h24v2h-24zM223 438h14v2h-14zM219 446h18v2h-18zM225 448h12v2h-12zM217 456h20v2h-20zM217 458h20v2h-20zM220 464h17v2h-17zM226 466h11v2h-11zM232 468h5v2h-5zM212 468h4v2h-4zM226 472h11v2h-11zM220 474h17v2h-17zM226 476h11v2h-11zM226 484h11v2h-11zM232 486h5v2h-5zM214 490h23v2h-23zM218 492h19v2h-19zM212 492h5v2h-5zM224 498h13v2h-13zM224 500h13v2h-13zM230 502h7v2h-7zM217 506h20v2h-20zM212 508h25v2h-25zM222 512h15v2h-15zM220 514h17v2h-17zM222 518h15v2h-15zM222 520h15v2h-15zM226 522h11v2h-11zM218 528h19v2h-19zM212 530h25v2h-25zM212 532h25v2h-25zM224 538h13v2h-13zM224 540h13v2h-13zM220 542h17v2h-17zM212 550h25v2h-25zM212 552h25v2h-25zM221 554h16v2h-16zM225 562h12v2h-12zM229 564h8v2h-8zM231 568h6v2h-6zM219 570h18v2h-18zM219 572h18v2h-18zM212 572h5v2h-5zM212 578h25v2h-25zM212 580h25v2h-25zM229 584h8v2h-8zM221 586h16v2h-16zM225 588h12v2h-12zM212 588h7v2h-7zM228 592h9v2h-9zM224 594h13v2h-13zM218 596h19v2h-19zM212 596h5v2h-5zM219 604h18v2h-18zM213 606h24v2h-24zM212 606h7v2h-7zM216 612h21v2h-21zM226 614h11v2h-11zM212 620h25v2h-25zM215 622h22v2h-22zM212 624h25v2h-25zM212 630h25v2h-25zM212 632h25v2h-25zM221 634h16v2h-16zM214 638h23v2h-23zM220 640h17v2h-17zM215 644h22v2h-22zM213 646h24v2h-24zM219 648h18v2h-18zM224 652h13v2h-13zM214 654h23v2h-23zM225 660h12v2h-12zM221 662h16v2h-16zM212 666h25v2h-25zM212 668h25v2h-25zM219 670h18v2h-18zM222 678h15v2h-15zM220 680h17v2h-17zM213 686h24v2h-24zM223 688h14v2h-14zM226 692h11v2h-11zM222 694h15v2h-15zM220 696h17v2h-17zM216 704h21v2h-21zM216 706h21v2h-21zM216 708h21v2h-21zM221 714h16v2h-16zM225 716h12v2h-12zM212 716h6v2h-6z" fill="#CE0000"/>
<rect x="245" y="140" width="25" height="576" fill="#AEAEAE"/><path d="M245 141h20v2h-20zM245 143h16v2h-16zM245 147h18v2h-18zM245 149h22v2h-22zM262 149h8v2h-8zM245 155h23v2h-23zM245 157h13v2h-13zM245 159h13v2h-13zM245 167h16v2h-16zM245 169h25v2h-25zM245 171h16v2h-16zM263 171h7v2h-7zM245 175h17v2h-17zM245 177h23v2h-23zM245 179h23v2h-23zM245 185h23v2h-23zM245 187h21v2h-21zM245 189h17v2h-17zM245 193h6v2h-6zM245 195h8v2h-8zM245 197h12v2h-12zM262 197h8v2h-8zM245 203h21v2h-21zM245 205h17v2h-17zM245 207h21v2h-21zM245 215h16v2h-16zM245 217h20v2h-20zM245 219h25v2h-25zM245 223h25v2h-25zM245 225h25v2h-25zM245 227h16v2h-16zM245 233h25v2h-25zM245 235h18v2h-18zM245 243h9v2h-9zM245 245h9v2h-9zM245 247h15v2h-15zM245 253h10v2h-10zM245 255h16v2h-16zM245 259h17v2h-17zM245 261h11v2h-11zM245 263h11v2h-11zM245 267h25v2h-25zM245 269h22v2h-22zM245 271h25v2h-25zM245 277h11v2h-11zM245 279h5v2h-5zM263 279h7v2h-7zM245 287h14v2h-14zM245 289h14v2h-14zM245 293h16v2h-16zM245 295h16v2h-16zM245 301h22v2h-22zM245 303h18v2h-18zM245 305h24v2h-24zM245 313h24v2h-24zM245 315h20v2h-20zM245 319h17v2h-17zM245 321h21v2h-21zM245 323h17v2h-17zM245 327h20v2h-20zM245 329h14v2h-14zM245 331h20v2h-20zM245 335h25v2h-25zM245 337h21v2h-21zM245 343h22v2h-22zM245 345h16v2h-16zM245 347h25v2h-25zM262 347h8v2h-8zM245 351h21v2h-21zM245 353h15v2h-15zM245 355h15v2h-15zM245 361h12v2h-12zM245 363h16v2h-16zM245 371h15v2h-15zM245 373h9v2h-9zM245 375h9v2h-9zM245 379h15v2h-15zM245 381h25v2h-25zM245 383h19v2h-19zM266 383h4v2h-4zM245 389h16v2h-16zM245 391h12v2h-12zM245 395h19v2h-19zM245 397h17v2h-17zM245 399h23v2h-23zM245 403h11v2h-11zM245 405h9v2h-9zM245 407h9v2h-9zM245 411h25v2h-25zM245 413h19v2h-19zM245 415h23v2h-23zM245 419h16v2h-16zM245 421h20v2h-20zM245 423h20v2h-20zM245 429h22v2h-22zM245 431h16v2h-16zM245 433h16v2h-16zM245 439h13v2h-13zM245 441h13v2h-13zM263 441h7v2h-7zM245 449h25v2h-25zM245 451h15v2h-15zM245 453h13v2h-13zM245 461h19v2h-19zM245 463h15v2h-15zM245 465h13v2h-13zM245 471h19v2h-19zM245 473h17v2h-17zM262 473h8v2h-8zM245 481h21v2h-21zM245 483h11v2h-11zM262 483h8v2h-8zM245 487h19v2h-19zM245 489h15v2h-15zM245 497h15v2h-15zM245 499h5v2h-5zM245 501h11v2h-11zM263 501h7v2h-7zM245 507h12v2h-12zM245 509h12v2h-12zM267 509h3v2h-3zM245 513h23v2h-23zM245 515h19v2h-19zM245 519h25v2h-25zM245 521h21v2h-21zM245 523h15v2h-15zM245 527h24v2h-24zM245 529h24v2h-24zM245 531h20v2h-20zM265 531h5v2h-5zM245 535h19v2h-19zM245 537h17v2h-17zM267 537h3v2h-3zM245 543h16v2h-16zM245 545h25v2h-25zM245 551h10v2h-10zM245 553h16v2h-16zM245 559h16v2h-16zM245 561h12v2h-12zM245 563h16v2h-16zM245 567h25v2h-25zM245 569h22v2h-22zM245 577h11v2h-11zM245 579h11v2h-11zM245 587h15v2h-15zM245 589h25v2h-25zM245 591h21v2h-21zM262 591h8v2h-8zM245 597h23v2h-23zM245 599h17v2h-17zM245 601h17v2h-17zM266 601h4v2h-4zM245 609h25v2h-25zM245 611h16v2h-16zM245 613h22v2h-22zM266 613h4v2h-4zM245 617h20v2h-20zM245 619h16v2h-16zM245 621h10v2h-10zM245 625h15v2h-15zM245 627h25v2h-25zM245 629h21v2h-21zM245 633h14v2h-14zM245 635h14v2h-14zM245 639h14v2h-14zM245 641h25v2h-25zM245 645h10v2h-10zM245 647h10v2h-10zM245 653h20v2h-20zM245 655h14v2h-14zM245 657h14v2h-14zM245 665h16v2h-16zM245 667h18v2h-18zM263 667h7v2h-7zM245 671h16v2h-16zM245 673h14v2h-14zM245 675h16v2h-16zM245 679h25v2h-25zM245 681h20v2h-20zM245 683h20v2h-20zM245 689h19v2h-19zM245 691h13v2h-13zM245 693h19v2h-19zM245 699h23v2h-23zM245 701h21v2h-21zM245 709h19v2h-19zM245 711h13v2h-13zM245 713h9v2h-9zM264 713h6v2h-6z" fill="#CE0000"/>
<rect x="347" y="140" width="26" height="576" fill="#AEAEAE"/><path d="M355 141h18v2h-18zM361 143h12v2h-12zM361 145h12v2h-12zM347 145h3v2h-3zM354 149h19v2h-19zM360 151h13v2h-13zM358 153h15v2h-15zM354 159h19v2h-19zM356 161h17v2h-17zM350 163h23v2h-23zM347 163h3v2h-3zM363 169h10v2h-10zM359 171h14v2h-14zM359 173h14v2h-14zM347 179h26v2h-26zM349 181h24v2h-24zM364 189h9v2h-9zM360 191h13v2h-13zM362 199h11v2h-11zM358 201h15v2h-15zM356 203h17v2h-17zM356 211h17v2h-17zM352 213h21v2h-21zM359 219h14v2h-14zM359 221h14v2h-14zM362 225h11v2h-11zM356 227h17v2h-17zM351 235h22v2h-22zM355 237h18v2h-18zM347 239h26v2h-26zM347 239h6v2h-6zM362 243h11v2h-11zM358 245h15v2h-15zM358 247h15v2h-15zM363 253h10v2h-10zM363 255h10v2h-10zM361 261h12v2h-12zM365 263h8v2h-8zM351 267h22v2h-22zM363 269h10v2h-10zM362 275h11v2h-11zM362 277h11v2h-11zM362 279h11v2h-11zM354 285h19v2h-19zM362 287h11v2h-11zM358 293h15v2h-15zM354 295h19v2h-19zM363 301h10v2h-10zM357 303h16v2h-16zM347 303h5v2h-5zM359 309h14v2h-14zM355 311h18v2h-18zM368 315h5v2h-5zM356 317h17v2h-17zM347 317h8v2h-8zM354 321h19v2h-19zM350 323h23v2h-23zM347 323h3v2h-3zM350 327h23v2h-23zM347 329h26v2h-26zM354 331h19v2h-19zM356 335h17v2h-17zM362 337h11v2h-11zM360 339h13v2h-13zM353 343h20v2h-20zM349 345h24v2h-24zM353 347h20v2h-20zM347 347h5v2h-5zM358 353h15v2h-15zM358 355h15v2h-15zM363 361h10v2h-10zM357 363h16v2h-16zM347 371h26v2h-26zM347 373h26v2h-26zM347 375h26v2h-26zM347 375h6v2h-6zM355 379h18v2h-18zM363 381h10v2h-10zM359 383h14v2h-14zM349 389h24v2h-24zM347 391h26v2h-26zM353 393h20v2h-20zM356 399h17v2h-17zM362 401h11v2h-11zM356 403h17v2h-17zM352 407h21v2h-21zM360 409h13v2h-13zM353 415h20v2h-20zM347 417h26v2h-26zM351 425h22v2h-22zM351 427h22v2h-22zM355 429h18v2h-18zM358 433h15v2h-15zM362 435h11v2h-11zM347 435h6v2h-6zM363 439h10v2h-10zM353 441h20v2h-20zM354 449h19v2h-19zM360 451h13v2h-13zM360 453h13v2h-13zM347 453h7v2h-7zM354 457h19v2h-19zM350 459h23v2h-23zM358 461h15v2h-15zM347 461h3v2h-3zM358 469h15v2h-15zM364 471h9v2h-9zM347 471h7v2h-7zM359 477h14v2h-14zM359 479h14v2h-14zM363 481h10v2h-10zM367 487h6v2h-6zM357 489h16v2h-16zM350 495h23v2h-23zM356 497h17v2h-17zM362 499h11v2h-11zM349 503h24v2h-24zM349 505h24v2h-24zM355 507h18v2h-18zM353 511h20v2h-20zM353 513h20v2h-20zM347 515h26v2h-26zM347 515h6v2h-6zM360 521h13v2h-13zM348 523h25v2h-25zM358 525h15v2h-15zM347 525h5v2h-5zM349 529h24v2h-24zM351 531h22v2h-22zM356 535h17v2h-17zM356 537h17v2h-17zM347 537h4v2h-4zM353 541h20v2h-20zM349 543h24v2h-24zM347 549h26v2h-26zM349 551h24v2h-24zM347 553h26v2h-26zM354 559h19v2h-19zM358 561h15v2h-15zM362 567h11v2h-11zM352 569h21v2h-21zM347 569h7v2h-7zM361 573h12v2h-12zM353 575h20v2h-20zM357 577h16v2h-16zM350 581h23v2h-23zM360 583h13v2h-13zM360 589h13v2h-13zM366 591h7v2h-7zM356 593h17v2h-17zM347 593h3v2h-3zM364 599h9v2h-9zM356 601h17v2h-17zM356 609h17v2h-17zM354 611h19v2h-19zM347 615h26v2h-26zM349 617h24v2h-24zM347 619h26v2h-26zM347 619h6v2h-6zM361 623h12v2h-12zM351 625h22v2h-22zM357 627h16v2h-16zM350 635h23v2h-23zM347 637h26v2h-26zM350 639h23v2h-23zM355 645h18v2h-18zM351 647h22v2h-22zM361 649h12v2h-12zM347 657h26v2h-26zM347 659h26v2h-26zM351 661h22v2h-22zM356 667h17v2h-17zM366 669h7v2h-7zM361 675h12v2h-12zM361 677h12v2h-12zM365 679h8v2h-8zM364 685h9v2h-9zM366 687h7v2h-7zM352 691h21v2h-21zM350 693h23v2h-23zM358 701h15v2h-15zM366 703h7v2h-7zM366 705h7v2h-7zM363 709h10v2h-10zM363 711h10v2h-10z" fill="#CE0000"/>
<rect x="270" y="140" width="77" height="576" fill="url(#vstr2)"/>
<path d="M308.5 1.5L349 88.5L308.5 175.5L268 88.5Z" fill="#AEAEAE" stroke="#CE0000" stroke-width="9" shape-rendering="auto"/>
<path d="M308.5 42.5L331.0 88.5L308.5 134.5L286.0 88.5Z" fill="#CE0000" shape-rendering="auto"/>
<path d="M308.5 62.5L321.0 88.5L308.5 114.5L296.0 88.5Z" fill="#AEAEAE" shape-rendering="auto"/>
<path d="M308.5 175.5L349 262.5L308.5 349.5L268 262.5Z" fill="#AEAEAE" stroke="#CE0000" stroke-width="9" shape-rendering="auto"/>
<path d="M308.5 216.5L331.0 262.5L308.5 308.5L286.0 262.5Z" fill="#CE0000" shape-rendering="auto"/>
<path d="M308.5 236.5L321.0 262.5L308.5 288.5L296.0 262.5Z" fill="#AEAEAE" shape-rendering="auto"/>
<path d="M308.5 349.5L349 436.5L308.5 523.5L268 436.5Z" fill="#AEAEAE" stroke="#CE0000" stroke-width="9" shape-rendering="auto"/>
<path d="M308.5 390.5L331.0 436.5L308.5 482.5L286.0 436.5Z" fill="#CE0000" shape-rendering="auto"/>
<path d="M308.5 410.5L321.0 436.5L308.5 462.5L296.0 436.5Z" fill="#AEAEAE" shape-rendering="auto"/>
<path d="M308.5 523.5L349 610.5L308.5 697.5L268 610.5Z" fill="#AEAEAE" stroke="#CE0000" stroke-width="9" shape-rendering="auto"/>
<path d="M308.5 564.5L331.0 610.5L308.5 656.5L286.0 610.5Z" fill="#CE0000" shape-rendering="auto"/>
<path d="M308.5 584.5L321.0 610.5L308.5 636.5L296.0 610.5Z" fill="#AEAEAE" shape-rendering="auto"/>
<path d="M308.5 697.5L349 784.5L308.5 871.5L268 784.5Z" fill="#AEAEAE" stroke="#CE0000" stroke-width="9" shape-rendering="auto"/>
<path d="M308.5 738.5L331.0 784.5L308.5 830.5L286.0 784.5Z" fill="#CE0000" shape-rendering="auto"/>
<path d="M308.5 758.5L321.0 784.5L308.5 810.5L296.0 784.5Z" fill="#AEAEAE" shape-rendering="auto"/>
<svg x="135" y="140" width="77" height="576" viewBox="135 140 77 576" overflow="hidden">
<rect x="135" y="140" width="77" height="576" fill="#AEAEAE"/><path d="M135 141h66v2h-66zM135 143h60v2h-60zM135 145h60v2h-60zM135 151h70v2h-70zM135 153h62v2h-62zM135 157h71v2h-71zM135 159h65v2h-65zM135 161h67v2h-67zM135 165h36v2h-36zM135 167h42v2h-42zM135 173h36v2h-36zM135 175h40v2h-40zM135 177h36v2h-36zM135 183h49v2h-49zM135 185h37v2h-37zM209 185h3v2h-3zM135 191h75v2h-75zM135 193h69v2h-69zM135 197h36v2h-36zM135 199h32v2h-32zM208 199h4v2h-4zM135 203h45v2h-45zM135 205h41v2h-41zM135 211h51v2h-51zM135 213h59v2h-59zM135 219h66v2h-66zM135 221h66v2h-66zM135 223h66v2h-66zM135 227h50v2h-50zM135 229h50v2h-50zM135 235h59v2h-59zM135 237h69v2h-69zM135 245h74v2h-74zM135 247h70v2h-70zM135 255h51v2h-51zM135 257h41v2h-41zM135 263h72v2h-72zM135 265h68v2h-68zM135 267h66v2h-66zM208 267h4v2h-4zM135 273h50v2h-50zM135 275h38v2h-38zM135 277h50v2h-50zM135 281h50v2h-50zM135 283h48v2h-48zM135 285h38v2h-38zM135 291h45v2h-45zM135 293h45v2h-45zM135 295h53v2h-53zM206 295h6v2h-6zM135 301h46v2h-46zM135 303h52v2h-52zM135 307h45v2h-45zM135 309h49v2h-49zM135 311h43v2h-43zM135 315h58v2h-58zM135 317h64v2h-64zM204 317h8v2h-8zM135 325h31v2h-31zM135 327h35v2h-35zM135 329h31v2h-31zM135 337h69v2h-69zM135 339h65v2h-65zM135 341h65v2h-65zM205 341h7v2h-7zM135 347h34v2h-34zM135 349h40v2h-40zM204 349h8v2h-8zM135 353h71v2h-71zM135 355h77v2h-77zM135 357h67v2h-67zM135 365h56v2h-56zM135 367h50v2h-50zM135 369h46v2h-46zM209 369h3v2h-3zM135 375h39v2h-39zM135 377h51v2h-51zM135 381h47v2h-47zM135 383h41v2h-41zM205 383h7v2h-7zM135 389h61v2h-61zM135 391h69v2h-69zM135 393h61v2h-61zM206 393h6v2h-6zM135 397h77v2h-77zM135 399h76v2h-76zM135 403h58v2h-58zM135 405h52v2h-52zM135 413h48v2h-48zM135 415h54v2h-54zM135 419h54v2h-54zM135 421h58v2h-58zM135 427h64v2h-64zM135 429h74v2h-74zM135 431h74v2h-74zM205 431h7v2h-7zM135 437h58v2h-58zM135 439h56v2h-56zM135 441h56v2h-56zM135 445h73v2h-73zM135 447h69v2h-69zM135 453h34v2h-34zM135 455h46v2h-46zM135 457h34v2h-34zM135 463h77v2h-77zM135 465h75v2h-75zM135 473h53v2h-53zM135 475h55v2h-55zM135 477h53v2h-53zM206 477h6v2h-6zM135 481h57v2h-57zM135 483h55v2h-55zM135 489h49v2h-49zM135 491h49v2h-49zM135 493h49v2h-49zM135 497h60v2h-60zM135 499h64v2h-64zM135 507h68v2h-68zM135 509h68v2h-68zM135 517h49v2h-49zM135 519h49v2h-49zM135 521h49v2h-49zM135 527h44v2h-44zM135 529h40v2h-40zM135 535h43v2h-43zM135 537h35v2h-35zM207 537h5v2h-5zM135 545h57v2h-57zM135 547h59v2h-59zM135 549h69v2h-69zM135 555h77v2h-77zM135 557h77v2h-77zM135 559h71v2h-71zM135 563h66v2h-66zM135 565h62v2h-62zM135 567h72v2h-72zM135 571h54v2h-54zM135 573h58v2h-58zM135 575h58v2h-58zM135 581h51v2h-51zM135 583h45v2h-45zM135 585h49v2h-49zM135 589h36v2h-36zM135 591h42v2h-42zM135 597h42v2h-42zM135 599h42v2h-42zM205 599h7v2h-7zM135 605h43v2h-43zM135 607h53v2h-53zM135 609h45v2h-45zM207 609h5v2h-5zM135 613h51v2h-51zM135 615h57v2h-57zM135 617h53v2h-53zM206 617h6v2h-6zM135 625h49v2h-49zM135 627h53v2h-53zM135 635h52v2h-52zM135 637h52v2h-52zM135 641h39v2h-39zM135 643h45v2h-45zM135 647h37v2h-37zM135 649h41v2h-41zM135 657h70v2h-70zM135 659h70v2h-70zM135 661h64v2h-64zM208 661h4v2h-4zM135 667h59v2h-59zM135 669h59v2h-59zM135 671h47v2h-47zM135 675h49v2h-49zM135 677h39v2h-39zM135 681h51v2h-51zM135 683h45v2h-45zM135 685h47v2h-47zM206 685h6v2h-6zM135 691h38v2h-38zM135 693h38v2h-38zM135 695h40v2h-40zM135 703h56v2h-56zM135 705h66v2h-66zM135 707h56v2h-56zM135 715h39v2h-39zM135 717h35v2h-35zM135 719h35v2h-35z" fill="#CE0000"/>
<rect x="135" y="140" width="77" height="160" fill="url(#vstr)"/>
<path d="M153 140H193L210 176V192L199 214L210 236V252L193 289L173.5 300L153 289L136 252V236L147 214L136 192V176Z" fill="#CE0000" shape-rendering="auto"/>
<path d="M163 140H184L173.5 158Z" fill="#AEAEAE" shape-rendering="auto"/>
<path d="M159.7 156.3L166.8 172.0L151.9 202.0L145.2 186.0Z" fill="#AEAEAE" shape-rendering="auto"/>
<path d="M187.3 156.3L180.2 172.0L195.1 202.0L201.8 186.0Z" fill="#AEAEAE" shape-rendering="auto"/>
<path d="M159.7 271.2L166.8 255.5L151.9 225.5L145.2 241.5Z" fill="#AEAEAE" shape-rendering="auto"/>
<path d="M187.3 271.2L180.2 255.5L195.1 225.5L201.8 241.5Z" fill="#AEAEAE" shape-rendering="auto"/>
<path d="M173.5 183L187.0 214L173.5 245L160.0 214Z" fill="url(#vstr2)" shape-rendering="auto"/>
<path d="M173.5 262L218 344L173.5 426L129 344Z" fill="#CE0000" shape-rendering="auto"/>
<path d="M173.5 274L210 344L173.5 414L137 344Z" fill="#AEAEAE" shape-rendering="auto"/>
<path d="M173.5 320L186.5 343L173.5 366L160.5 343Z" fill="#CE0000" shape-rendering="auto"/>
<path d="M173.5 405L212 455V470L173.5 432L135 470V455Z" fill="#CE0000" shape-rendering="auto"/>
<rect x="135" y="540" width="77" height="180" fill="#CE0000"/>
<path d="M157 556H189L172.6 592Z" fill="#AEAEAE" shape-rendering="auto"/>
<path d="M135 578h8v4h-8z M204 580h8v4h-8z M135 590h12v4h-12z M200 592h12v4h-12z M135 604h6v4h-6z M206 606h6v4h-6z M135 626h14v4h-14z M198 628h14v4h-14z M135 640h10v4h-10z M202 642h10v4h-10z M135 652h6v4h-6z M206 654h6v4h-6z M135 672h12v4h-12z M200 674h12v4h-12z M135 690h8v4h-8z M204 692h8v4h-8z M135 704h10v4h-10z M202 706h10v4h-10z " fill="#AEAEAE"/>
<path d="M156.5 580h9v4h-9z M181.5 580h9v4h-9z M151.5 596h14v4h-14z M181.5 596h12v4h-12z M147.5 610h18v4h-18z M181.5 610h16v4h-16z M161.5 646h4v4h-4z M181.5 646h4v4h-4z M161.5 678h4v4h-4z M181.5 678h4v4h-4z M151.5 688h14v4h-14z M181.5 688h12v4h-12z M149.5 702h16v4h-16z M181.5 702h14v4h-14z " fill="#AEAEAE"/>
<path d="M172.6 616.5L181.6 633.5L172.6 650.5L163.6 633.5Z" fill="#AEAEAE" shape-rendering="auto"/>
<path d="M157.6 645L166.6 662L157.6 679L148.6 662Z" fill="#AEAEAE" shape-rendering="auto"/>
<path d="M187.6 645L196.6 662L187.6 679L178.6 662Z" fill="#AEAEAE" shape-rendering="auto"/>
<path d="M172.6 676L180.6 692L172.6 708L164.6 692Z" fill="#AEAEAE" shape-rendering="auto"/>
</svg>
</svg>
<div class="a" style="left:104px;top:716px;width:1428px;height:17px;background:linear-gradient(#F3F1EC,#FEFEFB 60%,#EEEDE5)"></div>
<div class="a" style="left:105px;top:717px;width:16px;height:15px;border:1px solid #fff;border-radius:2px;background:linear-gradient(135deg,#DDE6FE,#B8CBF8)"><svg class="a" style="left:4px;top:2px" width="8" height="11"><path d="M6 1L2 5.5L6 10" fill="none" stroke="#4D6185" stroke-width="2"/></svg></div>
<div class="a" style="left:122px;top:717px;width:10px;height:15px;border:1px solid #fff;border-radius:2px;background:linear-gradient(90deg,#C8D6FA,#B4C8F8)"></div>
<div class="a" style="left:1532px;top:140px;width:17px;height:576px;background:linear-gradient(90deg,#F3F1EC,#FEFEFB 60%,#EEEDE5)"></div>
<div class="a" style="left:1533px;top:141px;width:15px;height:16px;border:1px solid #fff;border-radius:2px;background:linear-gradient(135deg,#DDE6FE,#B8CBF8)"><svg class="a" style="left:2px;top:4px" width="11" height="8"><path d="M1 6L5.5 2L10 6" fill="none" stroke="#4D6185" stroke-width="2"/></svg></div>
<div class="a" style="left:479px;top:150px;width:1300px;height:260px;background:#7386D5;border-radius:7px 7px 0 0;box-shadow:inset 1px 0 0 #5D68B0,inset -1px 0 0 #5D68B0,inset 0 -1px 0 #5D68B0,inset 3px 0 0 #7686D4"></div>
<div class="a" style="left:479px;top:150px;width:1300px;height:30px;background:linear-gradient(#5D6DBA 0px,#5D6DBA 1px,#95B2F0 1px,#95B2F0 2px,#88A5E8 3px,#7E9AE0 4px,#7A94DE 6px,#7A94DE 17px,#80A3E6 20px,#80A3E6 26px,#7A98E0 27px,#7490D8 28px,#7088CC 30px);border-radius:7px 7px 0 0;box-shadow:inset 1px 0 0 #6A7CC8,inset -1px 0 0 #6A7CC8"></div>
<div class="ttl" style="left:505px;top:159px;letter-spacing:-0.5px">MCT Rapport Editor&nbsp;&nbsp;- 81019.RPP</div>
<div class="xb" style="left:1666px;top:156px"><div class="a" style="left:4px;top:12px;width:7px;height:3px;background:#fff"></div></div>
<div class="xb" style="left:1689px;top:156px"><div class="a" style="left:4px;top:4px;width:11px;height:11px;border:1px solid #fff;border-top-width:3px"></div></div>
<div class="xb cl" style="left:1712px;top:156px"><svg class="a" style="left:3px;top:3px" width="14" height="14"><path d="M2 2L12 12M12 2L2 12" stroke="#fff" stroke-width="2.2"/></svg></div>
<div class="a" style="left:483px;top:180px;width:1300px;height:51px;background:#ECE9D8;"></div>
<div class="menu" style="left:488px;top:183px">File</div>
<div class="menu" style="left:515px;top:183px">Edit</div>
<div class="menu" style="left:546px;top:183px">View</div>
<div class="menu" style="left:580px;top:183px">Extras</div>
<div class="menu" style="left:623px;top:183px">Window</div>
<div class="menu" style="left:671px;top:183px">?</div>
<div class="sep" style="left:483px;top:200px;width:1300px"></div>
<svg class="a" style="left:0;top:0" width="1678" height="460" shape-rendering="crispEdges">
<rect x="489" y="205" width="23" height="22" fill="#716F64"/><rect x="489" y="205" width="22" height="21" fill="#FFF"/><rect x="490" y="206" width="21" height="20" fill="#ACA899"/><rect x="490" y="206" width="20" height="19" fill="#ECE9D8"/>
<g transform="translate(492,208)"><path d="M3.5 0.5H9.5L12.5 3.5V13.5H3.5Z" fill="#fff" stroke="#000"/><path d="M9.5 0.5V3.5H12.5" fill="none" stroke="#000"/></g>
<rect x="512" y="205" width="23" height="22" fill="#716F64"/><rect x="512" y="205" width="22" height="21" fill="#FFF"/><rect x="513" y="206" width="21" height="20" fill="#ACA899"/><rect x="513" y="206" width="20" height="19" fill="#ECE9D8"/>
<g transform="translate(515,208)"><path d="M1.5 4.5H5.5L6.5 5.5H10.5V7.5" fill="#FFFF80" stroke="#000"/><path d="M1.5 4.5V12.5H11.5L15 7.5H5.5L1.5 12.5" fill="#808000" stroke="#000"/><path d="M2 5H5V7L2 11Z" fill="#FFFF80"/><path d="M9.5 2.5C10.5 0.5 13.5 0.5 14.5 3.5" fill="none" stroke="#000"/><path d="M13 3H16V5Z" fill="#000"/></g>
<rect x="535" y="205" width="23" height="22" fill="#716F64"/><rect x="535" y="205" width="22" height="21" fill="#FFF"/><rect x="536" y="206" width="21" height="20" fill="#ACA899"/><rect x="536" y="206" width="20" height="19" fill="#ECE9D8"/>
<g transform="translate(538,208)"><rect x="1" y="0" width="14" height="14" fill="#000"/><rect x="2" y="1" width="12" height="12" fill="#808000"/><rect x="4" y="1" width="8" height="6" fill="#D8D8C8"/><rect x="4" y="9" width="8" height="4" fill="#000"/><rect x="9" y="10" width="2" height="3" fill="#fff"/><rect x="13" y="1" width="1" height="1" fill="#fff"/></g>
<rect x="566" y="205" width="23" height="22" fill="#716F64"/><rect x="566" y="205" width="22" height="21" fill="#FFF"/><rect x="567" y="206" width="21" height="20" fill="#ACA899"/><rect x="567" y="206" width="20" height="19" fill="#ECE9D8"/>
<g transform="translate(569,208)"><rect x="1" y="4" width="7" height="6" fill="#000"/><rect x="2" y="5" width="5" height="2" fill="#C0C080"/><path d="M8.5 0.5H12.5L14.5 2.5V9.5H8.5Z" fill="#fff" stroke="#000"/><path d="M10 4.5H13M10 6.5H13" stroke="#000"/><path d="M3 12.5Q5 14.5 9 13.5L11 11" fill="none" stroke="#0000A0" stroke-width="1.2" shape-rendering="auto"/><path d="M9 10L12 9L12 12Z" fill="#0000A0"/></g>
<rect x="589" y="205" width="23" height="22" fill="#716F64"/><rect x="589" y="205" width="22" height="21" fill="#FFF"/><rect x="590" y="206" width="21" height="20" fill="#ACA899"/><rect x="590" y="206" width="20" height="19" fill="#ECE9D8"/>
<g transform="translate(592,208)"><path d="M1.5 0.5H5.5L7.5 2.5V9.5H1.5Z" fill="#fff" stroke="#000"/><path d="M3 4.5H6M3 6.5H6" stroke="#000"/><rect x="9" y="0" width="7" height="6" fill="#000"/><rect x="10" y="1" width="5" height="2" fill="#C0C080"/><path d="M3 12.5Q5 14.5 9 13.5L11 11" fill="none" stroke="#0000A0" stroke-width="1.2" shape-rendering="auto"/><path d="M9 10L12 9L12 12Z" fill="#0000A0"/></g>
<rect x="620" y="205" width="23" height="22" fill="#716F64"/><rect x="620" y="205" width="22" height="21" fill="#FFF"/><rect x="621" y="206" width="21" height="20" fill="#ACA899"/><rect x="621" y="206" width="20" height="19" fill="#ECE9D8"/>
<g transform="translate(623,208)"><path d="M1.5 0.5H7.5L10.5 3.5V13.5H1.5Z" fill="#fff" stroke="#000"/><circle cx="9" cy="10" r="3" fill="#A0E0E0" stroke="#000" shape-rendering="auto"/><path d="M11 12L14 15" stroke="#000" stroke-width="2" shape-rendering="auto"/></g>
<rect x="643" y="205" width="23" height="22" fill="#716F64"/><rect x="643" y="205" width="22" height="21" fill="#FFF"/><rect x="644" y="206" width="21" height="20" fill="#ACA899"/><rect x="644" y="206" width="20" height="19" fill="#ECE9D8"/>
<g transform="translate(646,208)"><path d="M4.5 1.5H12.5L14 4.5H3Z" fill="#fff" stroke="#000"/><rect x="1.5" y="5.5" width="13" height="6" fill="#C0C0C0" stroke="#000"/><rect x="3" y="9" width="10" height="1" fill="#000"/><rect x="8" y="8" width="3" height="1" fill="#E0E000"/><rect x="2.5" y="11.5" width="11" height="2" fill="#fff" stroke="#000"/><path d="M13 6L15 8" stroke="#808080"/></g>
<rect x="674" y="205" width="23" height="22" fill="#716F64"/><rect x="674" y="205" width="22" height="21" fill="#FFF"/><rect x="675" y="206" width="21" height="20" fill="#ACA899"/><rect x="675" y="206" width="20" height="19" fill="#ECE9D8"/>
<g transform="translate(677,208)"><path d="M1.5 5.5H5.5L7.5 7.5V14.5H1.5Z" fill="#fff" stroke="#000"/><path d="M3 9.5H6M3 11.5H6" stroke="#000"/><path d="M9 9L14 3L16 5L11 11Z" fill="#FFFF00" stroke="#000" shape-rendering="auto"/><path d="M13 2L15 0L16.5 2L15 4Z" fill="#C04040" shape-rendering="auto"/></g>
<rect x="697" y="205" width="23" height="22" fill="#716F64"/><rect x="697" y="205" width="22" height="21" fill="#FFF"/><rect x="698" y="206" width="21" height="20" fill="#ACA899"/><rect x="698" y="206" width="20" height="19" fill="#ECE9D8"/>
<g transform="translate(700,208)"><path d="M1.5 5.5H5.5L7.5 7.5V14.5H1.5Z" fill="#fff" stroke="#000"/><path d="M3 9.5H6M3 11.5H6" stroke="#000"/><path d="M9 6L11 9L16 2" fill="none" stroke="#0000C0" stroke-width="1.5" shape-rendering="auto"/></g>
<rect x="720" y="205" width="23" height="22" fill="#716F64"/><rect x="720" y="205" width="22" height="21" fill="#FFF"/><rect x="721" y="206" width="21" height="20" fill="#ACA899"/><rect x="721" y="206" width="20" height="19" fill="#ECE9D8"/>
<g transform="translate(723,208)"><path d="M1 7H4L6 3H10L11 1" fill="none" stroke="#000" stroke-width="2" shape-rendering="auto"/><path d="M1 5V10M11 0V5" stroke="#000" stroke-width="1.5"/><path d="M5 11H12" stroke="#0000A0" stroke-width="1.5"/><path d="M11 9L14 11L11 13Z" fill="#0000A0"/></g>
<rect x="751" y="205" width="23" height="22" fill="#716F64"/><rect x="751" y="205" width="22" height="21" fill="#FFF"/><rect x="752" y="206" width="21" height="20" fill="#ACA899"/><rect x="752" y="206" width="20" height="19" fill="#ECE9D8"/>
<g transform="translate(754,208)"><path d="M1.5 0.5H5.5L7.5 2.5V9.5H1.5Z" fill="#fff" stroke="#000"/><path d="M3 4.5H6M3 6.5H6" stroke="#000"/><path d="M8.5 0.5H12.5L14.5 2.5V9.5H8.5Z" fill="#fff" stroke="#000"/><path d="M10 4.5H13M10 6.5H13" stroke="#000"/><path d="M3 12.5Q5 14.5 9 13.5L11 11" fill="none" stroke="#0000A0" stroke-width="1.2" shape-rendering="auto"/><path d="M9 10L12 9L12 12Z" fill="#0000A0"/></g>
<rect x="774" y="205" width="23" height="22" fill="#716F64"/><rect x="774" y="205" width="22" height="21" fill="#FFF"/><rect x="775" y="206" width="21" height="20" fill="#ACA899"/><rect x="775" y="206" width="20" height="19" fill="#ECE9D8"/>
<g transform="translate(777,208)"><path d="M1.5 0.5H6.5L8.5 2.5V13.5H1.5Z" fill="#fff" stroke="#000"/><path d="M3 4.5H7M3 6.5H7M3 8.5H7M3 10.5H7" stroke="#000"/><path d="M10 3.5H14M10 12.5H14M12 4V12" stroke="#E00000" stroke-width="1.2"/></g>
<rect x="805" y="205" width="23" height="22" fill="#716F64"/><rect x="805" y="205" width="22" height="21" fill="#FFF"/><rect x="806" y="206" width="21" height="20" fill="#ACA899"/><rect x="806" y="206" width="20" height="19" fill="#ECE9D8"/>
<g transform="translate(808,208)"><path d="M4.5 4.5V2.5L6.5 0.5H10.5L12.5 2.5V5.5L9.5 8.5V10.5H6.5V7.5L9.5 4.5V2.5H7.5V4.5Z" fill="#FFFF00" stroke="#000"/><rect x="6.5" y="11.5" width="3" height="2.5" fill="#FFFF00" stroke="#000"/></g>
<rect x="828" y="205" width="23" height="22" fill="#716F64"/><rect x="828" y="205" width="22" height="21" fill="#FFF"/><rect x="829" y="206" width="21" height="20" fill="#ACA899"/><rect x="829" y="206" width="20" height="19" fill="#ECE9D8"/>
<g transform="translate(831,208)"><path d="M1 0V12L4 9L6 14L8 13L6 8H10Z" fill="#000"/><path d="M9.5 3.5V1.5L11 0.5H14L15.5 1.5V4L13 6.5V8" fill="none" stroke="#0000A0" stroke-width="2"/><rect x="12" y="10" width="3" height="2" fill="#0000A0"/></g>
</svg>
<div class="vsep" style="left:857px;top:202px;height:28px"></div>
<div class="a" style="left:483px;top:231px;width:1300px;height:200px;background:#808080;box-shadow:inset 1px 1px 0 #716F64"></div>
<div class="a" style="left:485px;top:232px;width:1093px;height:160px;background:#7386D5;border-radius:7px 7px 0 0;box-shadow:inset 1px 0 0 #5D68B0,inset -1px 0 0 #5D68B0,inset 0 -1px 0 #5D68B0,inset 3px 0 0 #7686D4"></div>
<div class="a" style="left:485px;top:232px;width:1093px;height:30px;background:linear-gradient(#5D6DBA 0px,#5D6DBA 1px,#95B2F0 1px,#95B2F0 2px,#88A5E8 3px,#7E9AE0 4px,#7A94DE 6px,#7A94DE 17px,#80A3E6 20px,#80A3E6 26px,#7A98E0 27px,#7490D8 28px,#7088CC 30px);border-radius:7px 7px 0 0;box-shadow:inset 1px 0 0 #6A7CC8,inset -1px 0 0 #6A7CC8"></div>
<div class="ttl" style="left:511px;top:241px;letter-spacing:-0.5px">81019.RPP</div>
<div class="xb" style="left:1506px;top:238px"><div class="a" style="left:4px;top:12px;width:7px;height:3px;background:#fff"></div></div>
<div class="xb" style="left:1529px;top:238px"><div class="a" style="left:4px;top:4px;width:11px;height:11px;border:1px solid #fff;border-top-width:3px"></div></div>
<div class="xb cl" style="left:1552px;top:238px"><svg class="a" style="left:3px;top:3px" width="14" height="14"><path d="M2 2L12 12M12 2L2 12" stroke="#fff" stroke-width="2.2"/></svg></div>
<div class="a" style="left:489px;top:262px;width:1086px;height:120px;background:#FFFFFF;box-shadow:inset 1px 1px 0 #716F64,inset 2px 2px 0 #ACA899"></div>
<svg class="a" style="left:491px;top:264px" width="1082" height="78"><defs><pattern id="tl" width="36" height="36" patternUnits="userSpaceOnUse"><rect width="36" height="36" fill="#0F6A7E"/><path d="M-40 0L0 40M-37 0L3 40M-34 0L6 40M-31 0L9 40M-28 0L12 40M-25 0L15 40M-22 0L18 40M-19 0L21 40M-16 0L24 40M-13 0L27 40M-10 0L30 40M-7 0L33 40M-4 0L36 40M-1 0L39 40M2 0L42 40M5 0L45 40M8 0L48 40M11 0L51 40M14 0L54 40M17 0L57 40M20 0L60 40M23 0L63 40M26 0L66 40M29 0L69 40M32 0L72 40M35 0L75 40M38 0L78 40M41 0L81 40M44 0L84 40M47 0L87 40M50 0L90 40M53 0L93 40M56 0L96 40M59 0L99 40M62 0L102 40M65 0L105 40M68 0L108 40M71 0L111 40M74 0L114 40M77 0L117 40" stroke="#68AEBC" stroke-width="0.85"/><clipPath id="dm"><path d="M18 0L36 18L18 36L0 18Z"/></clipPath><g clip-path="url(#dm)"><rect width="36" height="36" fill="#0F6A7E"/><path d="M-40 40L0 0M-37 40L3 0M-34 40L6 0M-31 40L9 0M-28 40L12 0M-25 40L15 0M-22 40L18 0M-19 40L21 0M-16 40L24 0M-13 40L27 0M-10 40L30 0M-7 40L33 0M-4 40L36 0M-1 40L39 0M2 40L42 0M5 40L45 0M8 40L48 0M11 40L51 0M14 40L54 0M17 40L57 0M20 40L60 0M23 40L63 0M26 40L66 0M29 40L69 0M32 40L72 0M35 40L75 0M38 40L78 0M41 40L81 0M44 40L84 0M47 40L87 0M50 40L90 0M53 40L93 0M56 40L96 0M59 40L99 0M62 40L102 0M65 40L105 0M68 40L108 0M71 40L111 0M74 40L114 0M77 40L117 0" stroke="#68AEBC" stroke-width="0.85"/></g></pattern></defs><rect width="1082" height="78" fill="url(#tl)"/></svg>
<div class="a" style="left:461px;top:375px;width:1300px;height:604px;background:#7386D5;border-radius:7px 7px 0 0;box-shadow:inset 1px 0 0 #5D68B0,inset -1px 0 0 #5D68B0,inset 0 -1px 0 #5D68B0,inset 3px 0 0 #7686D4"></div>
<div class="a" style="left:461px;top:375px;width:1300px;height:30px;background:linear-gradient(#5D6DBA 0px,#5D6DBA 1px,#95B2F0 1px,#95B2F0 2px,#88A5E8 3px,#7E9AE0 4px,#7A94DE 6px,#7A94DE 17px,#80A3E6 20px,#80A3E6 26px,#7A98E0 27px,#7490D8 28px,#7088CC 30px);border-radius:7px 7px 0 0;box-shadow:inset 1px 0 0 #6A7CC8,inset -1px 0 0 #6A7CC8"></div>
<div class="ttl" style="left:487px;top:384px;letter-spacing:-0.5px">79101_SR.RNP - MCT Cone colour arrangement editor</div>
<div class="xb" style="left:1649px;top:381px"><div class="a" style="left:4px;top:12px;width:7px;height:3px;background:#fff"></div></div>
<div class="xb" style="left:1672px;top:381px"><div class="a" style="left:4px;top:4px;width:11px;height:11px;border:1px solid #fff;border-top-width:3px"></div></div>
<div class="xb cl" style="left:1695px;top:381px"><svg class="a" style="left:3px;top:3px" width="14" height="14"><path d="M2 2L12 12M12 2L2 12" stroke="#fff" stroke-width="2.2"/></svg></div>
<div class="a" style="left:465px;top:405px;width:1300px;height:52px;background:#ECE9D8;"></div>
<div class="menu" style="left:471px;top:408px">File</div>
<div class="menu" style="left:498px;top:408px">Edit</div>
<div class="menu" style="left:529px;top:408px">View</div>
<div class="menu" style="left:562px;top:408px">Help</div>
<div class="sep" style="left:465px;top:425px;width:1300px"></div>
<svg class="a" style="left:0;top:0" width="1678" height="460" shape-rendering="crispEdges">
<rect x="471" y="430" width="23" height="22" fill="#716F64"/><rect x="471" y="430" width="22" height="21" fill="#FFF"/><rect x="472" y="431" width="21" height="20" fill="#ACA899"/><rect x="472" y="431" width="20" height="19" fill="#ECE9D8"/>
<g transform="translate(474,433)"><path d="M3.5 0.5H9.5L12.5 3.5V13.5H3.5Z" fill="#fff" stroke="#000"/><path d="M9.5 0.5V3.5H12.5" fill="none" stroke="#000"/></g>
<rect x="494" y="430" width="23" height="22" fill="#716F64"/><rect x="494" y="430" width="22" height="21" fill="#FFF"/><rect x="495" y="431" width="21" height="20" fill="#ACA899"/><rect x="495" y="431" width="20" height="19" fill="#ECE9D8"/>
<g transform="translate(497,433)"><path d="M1.5 4.5H5.5L6.5 5.5H10.5V7.5" fill="#FFFF80" stroke="#000"/><path d="M1.5 4.5V12.5H11.5L15 7.5H5.5L1.5 12.5" fill="#808000" stroke="#000"/><path d="M2 5H5V7L2 11Z" fill="#FFFF80"/><path d="M9.5 2.5C10.5 0.5 13.5 0.5 14.5 3.5" fill="none" stroke="#000"/><path d="M13 3H16V5Z" fill="#000"/></g>
<rect x="517" y="430" width="23" height="22" fill="#716F64"/><rect x="517" y="430" width="22" height="21" fill="#FFF"/><rect x="518" y="431" width="21" height="20" fill="#ACA899"/><rect x="518" y="431" width="20" height="19" fill="#ECE9D8"/>
<g transform="translate(520,433)"><rect x="1" y="0" width="14" height="14" fill="#000"/><rect x="2" y="1" width="12" height="12" fill="#808000"/><rect x="4" y="1" width="8" height="6" fill="#D8D8C8"/><rect x="4" y="9" width="8" height="4" fill="#000"/><rect x="9" y="10" width="2" height="3" fill="#fff"/><rect x="13" y="1" width="1" height="1" fill="#fff"/></g>
<rect x="548" y="430" width="23" height="22" fill="#716F64"/><rect x="548" y="430" width="22" height="21" fill="#FFF"/><rect x="549" y="431" width="21" height="20" fill="#ACA899"/><rect x="549" y="431" width="20" height="19" fill="#ECE9D8"/>
<g transform="translate(551,433)"><path d="M1.5 0.5H7.5L10.5 3.5V13.5H1.5Z" fill="#fff" stroke="#000"/><circle cx="9" cy="10" r="3" fill="#A0E0E0" stroke="#000" shape-rendering="auto"/><path d="M11 12L14 15" stroke="#000" stroke-width="2" shape-rendering="auto"/></g>
<rect x="571" y="430" width="23" height="22" fill="#716F64"/><rect x="571" y="430" width="22" height="21" fill="#FFF"/><rect x="572" y="431" width="21" height="20" fill="#ACA899"/><rect x="572" y="431" width="20" height="19" fill="#ECE9D8"/>
<g transform="translate(574,433)"><path d="M4.5 1.5H12.5L14 4.5H3Z" fill="#fff" stroke="#000"/><rect x="1.5" y="5.5" width="13" height="6" fill="#C0C0C0" stroke="#000"/><rect x="3" y="9" width="10" height="1" fill="#000"/><rect x="8" y="8" width="3" height="1" fill="#E0E000"/><rect x="2.5" y="11.5" width="11" height="2" fill="#fff" stroke="#000"/><path d="M13 6L15 8" stroke="#808080"/></g>
<rect x="602" y="430" width="23" height="22" fill="#716F64"/><rect x="602" y="430" width="22" height="21" fill="#FFF"/><rect x="603" y="431" width="21" height="20" fill="#ACA899"/><rect x="603" y="431" width="20" height="19" fill="#ECE9D8"/>
<g transform="translate(605,433)"><path d="M6 0L10 9M10 0L6 9" stroke="#ACA899" stroke-width="1.2" shape-rendering="auto"/><circle cx="5" cy="11.5" r="2.2" fill="none" stroke="#ACA899" stroke-width="1.2" shape-rendering="auto"/><circle cx="11" cy="11.5" r="2.2" fill="none" stroke="#ACA899" stroke-width="1.2" shape-rendering="auto"/></g>
<rect x="625" y="430" width="23" height="22" fill="#716F64"/><rect x="625" y="430" width="22" height="21" fill="#FFF"/><rect x="626" y="431" width="21" height="20" fill="#ACA899"/><rect x="626" y="431" width="20" height="19" fill="#ECE9D8"/>
<g transform="translate(628,433)"><path d="M1.5 0.5H7.5V9.5H1.5Z" fill="#ECE9D8" stroke="#ACA899"/><path d="M6.5 4.5H13.5V13.5H6.5Z" fill="#ECE9D8" stroke="#ACA899"/><path d="M8 7.5H12M8 9.5H12M8 11.5H12" stroke="#ACA899"/></g>
<rect x="648" y="430" width="23" height="22" fill="#716F64"/><rect x="648" y="430" width="22" height="21" fill="#FFF"/><rect x="649" y="431" width="21" height="20" fill="#ACA899"/><rect x="649" y="431" width="20" height="19" fill="#ECE9D8"/>
<g transform="translate(651,433)"><rect x="1" y="2" width="12" height="11" rx="1" fill="#ACA899"/><rect x="4" y="1" width="6" height="2" fill="#ACA899"/><path d="M7.5 7.5H14.5V14.5H7.5Z" fill="#ECE9D8" stroke="#ACA899"/><path d="M9 10.5H13" stroke="#ACA899"/></g>
<rect x="679" y="430" width="23" height="22" fill="#716F64"/><rect x="679" y="430" width="22" height="21" fill="#FFF"/><rect x="680" y="431" width="21" height="20" fill="#ACA899"/><rect x="680" y="431" width="20" height="19" fill="#ECE9D8"/>
<g transform="translate(682,433)"><path d="M1.5 5.5H5.5L7.5 7.5V14.5H1.5Z" fill="#fff" stroke="#000"/><path d="M3 9.5H6M3 11.5H6" stroke="#000"/><path d="M9 9L14 3L16 5L11 11Z" fill="#FFFF00" stroke="#000" shape-rendering="auto"/><path d="M13 2L15 0L16.5 2L15 4Z" fill="#C04040" shape-rendering="auto"/></g>
<rect x="702" y="430" width="23" height="22" fill="#716F64"/><rect x="702" y="430" width="22" height="21" fill="#FFF"/><rect x="703" y="431" width="21" height="20" fill="#ACA899"/><rect x="703" y="431" width="20" height="19" fill="#ECE9D8"/>
<g transform="translate(705,433)"><rect x="1" y="1" width="14" height="13" fill="#106070"/><rect x="2" y="2" width="12" height="11" fill="#30C0D0"/><rect x="3" y="3" width="10" height="3" fill="#fff"/><path d="M3.5 8H12.5M3.5 10H12.5M3.5 12H12.5" stroke="#106070" stroke-dasharray="1 1"/></g>
<rect x="733" y="430" width="23" height="22" fill="#716F64"/><rect x="733" y="430" width="22" height="21" fill="#FFF"/><rect x="734" y="431" width="21" height="20" fill="#ACA899"/><rect x="734" y="431" width="20" height="19" fill="#ECE9D8"/>
<g transform="translate(736,433)"><path d="M4.5 4.5V2.5L6.5 0.5H10.5L12.5 2.5V5.5L9.5 8.5V10.5H6.5V7.5L9.5 4.5V2.5H7.5V4.5Z" fill="#FFFF00" stroke="#000"/><rect x="6.5" y="11.5" width="3" height="2.5" fill="#FFFF00" stroke="#000"/></g>
<rect x="756" y="430" width="23" height="22" fill="#716F64"/><rect x="756" y="430" width="22" height="21" fill="#FFF"/><rect x="757" y="431" width="21" height="20" fill="#ACA899"/><rect x="757" y="431" width="20" height="19" fill="#ECE9D8"/>
<g transform="translate(759,433)"><path d="M1 0V12L4 9L6 14L8 13L6 8H10Z" fill="#000"/><path d="M9.5 3.5V1.5L11 0.5H14L15.5 1.5V4L13 6.5V8" fill="none" stroke="#0000A0" stroke-width="2"/><rect x="12" y="10" width="3" height="2" fill="#0000A0"/></g>
</svg>
<div class="vsep" style="left:785px;top:427px;height:28px"></div>
<div class="a" style="left:465px;top:456px;width:1300px;height:499px;background:#FFFFFF;box-shadow:inset 1px 1px 0 #716F64,inset 2px 2px 0 #ACA899"></div>
<div class="a" style="left:465px;top:955px;width:1300px;height:20px;background:#ECE9D8;"></div>
<div class="a" style="left:465px;top:955px;width:1300px;height:1px;background:#F8F7F2;"></div>
<div class="st" style="left:467px;top:961px">For Help, press F1</div>
<div class="cell" style="left:1609px;top:959px;width:25px;height:15px"><div class="st" style="left:1px;top:1px"></div></div>
<div class="cell" style="left:1637px;top:959px;width:27px;height:15px"><div class="st" style="left:1px;top:1px">NUM</div></div>
<div class="cell" style="left:1667px;top:959px;width:33px;height:15px"><div class="st" style="left:1px;top:1px"></div></div>
<div class="mono" style="left:966px;top:460px">Original pattern :79101_r</div>
<div class="mono" style="left:772px;top:496px">System  1:  1    2    3    4      System 25:  1    2    3    4
System  2:  1    2    3    4      System 26:  1    2    3    4
System  3:  1    2    3    4      System 27:  1    2    3    4
System  4:  1    2    3    4      System 28:  1    2    3    4
System  5:  1    2    3    4      System 29:  1    2    3    4
System  6:  1    2    3    4      System 30:  1    2    3    4
System  7:  1    2    3    4      System 31:  1    2    3    4
System  8:  1    2    3    4      System 32:  1    2    3    4
System  9:  1    2    3    4      System 33:  1    2    3    4
System 10:  1    2    3    4      System 34:  1    2    3    4
System 11:  1    2    3    4      System 35:  1    2    3    4
System 12:  1    2    3    4      System 36:  1    2    3    4
System 13:  1    2    3    4      System 37:  1    2    3    4
System 14:  1    2    3    4      System 38:  1    2    3    4
System 15:  1    2    3    4      System 39:  1    2    3    4
System 16:  1    2    3    4      System 40:  1    2    3    4
System 17:  1    2    3    4      System 41:  1    2    3    4
System 18:  1    2    3    4      System 42:  1    2    3    4
System 19:  1    2    3    4      System 43:  1    2    3    4
System 20:  1    2    3    4      System 44:  1    2    3    4
System 21:  1    2    3    4      System 45:  1    2    3    4
System 22:  1    2    3    4      System 46:  1    2    3    4
System 23:  1    2    3    4      System 47:  1    2    3    4
System 24:  1    2    3    4      System 48:  1    2    3    4</div>
<div class="a" style="left:32px;top:436px;width:332px;height:120px;background:#0831D9;border-radius:7px 7px 0 0"></div>
<div class="a" style="left:32px;top:436px;width:332px;height:29px;border-radius:7px 7px 0 0;background:linear-gradient(#0A58E8 0px,#3D90FA 2px,#0A63EE 4px,#0054E0 10px,#0050DC 20px,#0049D2 26px,#003EBC 29px)"></div>
<div class="a" style="left:35px;top:465px;width:326px;height:88px;background:#C3C3C3;"></div>
<div class="ttl" style="left:39px;top:445px;color:#fff">Vers :2.1&nbsp;&nbsp;&nbsp;( Customer:0&nbsp;&nbsp;Vers:0 )</div>
<div class="a" style="left:338px;top:441px;width:21px;height:21px;border:1px solid #fff;border-radius:3px;background:linear-gradient(135deg,#F0A080,#E05A30 50%,#C8401C)"><svg class="a" style="left:3px;top:3px" width="13" height="13"><path d="M2 2L11 11M11 2L2 11" stroke="#fff" stroke-width="2"/></svg></div>
<div class="st" style="left:110px;top:474px;letter-spacing:-0.3px">MCT Pattern Editor</div>
<div class="st" style="left:113px;top:499px;letter-spacing:-0.3px">Version 1.9</div>
<div class="st" style="left:110px;top:523px;letter-spacing:-0.3px">Copyright (C) 2000-2005</div>
<div class="a" style="left:299px;top:475px;width:48px;height:23px;border:1px solid #000;background:#ECE9D8;box-shadow:inset -1px -1px 0 #716F64,inset 1px 1px 0 #fff"><div class="st" style="left:15px;top:4px;font-size:12px;transform:scaleX(0.9)">OK</div></div>
<svg class="a" style="left:0;top:130px" width="97" height="135" viewBox="0 130 97 135" shape-rendering="crispEdges">
<rect x="6" y="138" width="88" height="18" fill="#B4B4B4"/><rect x="6.5" y="138.5" width="42" height="17" fill="none" stroke="#40D040" stroke-width="1.3"/><rect x="8.5" y="140.5" width="38" height="13" fill="none" stroke="#E0C040" stroke-width="0.8"/>
<rect x="7" y="156" width="19" height="17" fill="#B4B4B4"/>
<rect x="29" y="156" width="19" height="17" fill="#D00000"/>
<rect x="51" y="156" width="19" height="17" fill="#0000D0"/>
<rect x="73" y="156" width="19" height="17" fill="#A05050"/>
<rect x="7" y="176" width="19" height="17" fill="#D00000"/>
<rect x="11" y="180" width="11" height="9" fill="#B4B4B4"/>
<rect x="29" y="176" width="19" height="17" fill="#B4B4B4"/>
<rect x="33" y="180" width="11" height="9" fill="#D00000"/>
<rect x="51" y="176" width="19" height="17" fill="#B4B4B4"/>
<rect x="55" y="180" width="11" height="9" fill="#0000D0"/>
<rect x="73" y="176" width="19" height="17" fill="#B4B4B4"/>
<rect x="77" y="180" width="11" height="9" fill="#A05050"/>
<rect x="7" y="196" width="19" height="17" fill="#0000D0"/>
<rect x="11" y="200" width="11" height="9" fill="#B4B4B4"/>
<rect x="29" y="196" width="19" height="17" fill="#0000D0"/>
<rect x="33" y="200" width="11" height="9" fill="#D00000"/>
<rect x="51" y="196" width="19" height="17" fill="#D00000"/>
<rect x="55" y="200" width="11" height="9" fill="#0000D0"/>
<rect x="73" y="196" width="19" height="17" fill="#D00000"/>
<rect x="77" y="200" width="11" height="9" fill="#A05050"/>
<rect x="7" y="216" width="19" height="17" fill="#A05050"/>
<rect x="11" y="220" width="11" height="9" fill="#B4B4B4"/>
<rect x="29" y="216" width="19" height="17" fill="#A05050"/>
<rect x="33" y="220" width="11" height="9" fill="#D00000"/>
<rect x="51" y="216" width="19" height="17" fill="#A05050"/>
<rect x="55" y="220" width="11" height="9" fill="#0000D0"/>
<rect x="73" y="216" width="19" height="17" fill="#0000D0"/>
<rect x="77" y="220" width="11" height="9" fill="#A05050"/>
<rect x="7" y="236" width="19" height="17" fill="#B4B4B4"/>
<rect x="11" y="240" width="11" height="9" fill="#D4D4D4"/>
</svg>
<svg class="a" style="left:2px;top:3px" width="20" height="20" viewBox="0 0 20 20"><path d="M3 6C3 2 9 1 13 2C17 3 17 8 15 11C14 13 14 15 12 16C10 17 7 16 6 14C5 12 3 10 3 6Z" fill="#fff" stroke="#000" stroke-width="1.2"/><circle cx="8" cy="4.5" r="1.3" fill="#2030C0"/><circle cx="12" cy="5.5" r="1.3" fill="#C030C0"/><circle cx="5.5" cy="8" r="1.3" fill="#109010"/><circle cx="9" cy="8.5" r="1" fill="#10A0C0"/><circle cx="13.5" cy="9.5" r="1.5" fill="#D01010"/><circle cx="10" cy="12.5" r="1.2" fill="#333"/><path d="M2 15L4 13L6 16L4 18Z" fill="#A00010"/><path d="M14 15L16 13L18 16L16 18Z" fill="#A00010"/></svg>
<svg class="a" style="left:105px;top:117px" width="16" height="14" shape-rendering="crispEdges"><rect x="0" y="0" width="15" height="13" fill="#1E4C9A"/><rect x="1" y="2" width="13" height="10" fill="#F4F8FF"/><rect x="1" y="1" width="13" height="1" fill="#4A80D0"/></svg>
<svg class="a" style="left:484px;top:158px" width="16" height="16" viewBox="0 0 16 16"><circle cx="8" cy="8" r="7.5" fill="#30D050"/><circle cx="7" cy="5" r="1" fill="#60B0A0"/><circle cx="10" cy="6" r="1" fill="#60B0A0"/><circle cx="6" cy="9" r="1" fill="#60B0A0"/><circle cx="9" cy="10" r="1" fill="#60B0A0"/></svg>
<svg class="a" style="left:467px;top:383px" width="16" height="16" viewBox="0 0 16 16"><circle cx="8" cy="8" r="7.5" fill="#30D050"/><circle cx="7" cy="5" r="1" fill="#60B0A0"/><circle cx="10" cy="6" r="1" fill="#60B0A0"/><circle cx="6" cy="9" r="1" fill="#60B0A0"/><circle cx="9" cy="10" r="1" fill="#60B0A0"/></svg>
<svg class="a" style="left:491px;top:240px" width="16" height="16" shape-rendering="crispEdges"><path d="M0.5 0.5H14.5V12.5L12.5 14.5H2.5L0.5 13.5Z" fill="#fff" stroke="#000"/><text x="1.5" y="6" font-family="Liberation Sans" font-size="5.5" font-weight="bold" fill="#D02020">RPP</text><rect x="3" y="8" width="10" height="1" fill="#40C040"/><rect x="3" y="10" width="9" height="1" fill="#40C040"/><rect x="12" y="12" width="3" height="3" fill="#20C020"/></svg>
<svg class="a" style="left:50px;top:492px" width="36" height="36" viewBox="0 0 36 36"><path d="M3 9C3 3 12 1 19 2C27 3 30 9 28 15C27 19 26 22 24 25C21 28 16 28 13 25C11 22 9 20 6 18C4 16 3 13 3 9Z" fill="#fff" stroke="#000" stroke-width="1.3"/><path d="M10 6L13 4L14 8L11 9Z" fill="#1020C0"/><path d="M17 6L21 6L21 10L17 9Z" fill="#B030C0"/><path d="M5 10L8 9L9 12L6 13Z" fill="#108010"/><path d="M12 11L15 11L14 13Z" fill="#1090D0"/><path d="M22 11L26 10L25 16L21 15Z" fill="#D01010"/><circle cx="16" cy="19" r="2" fill="#444"/><text x="2" y="27" font-family="Liberation Sans" font-size="8" fill="#E02020">G</text><text x="8" y="31" font-family="Liberation Sans" font-size="8" fill="#E02020">R</text><text x="25" y="30" font-family="Liberation Sans" font-size="8" fill="#E02020">D</text><path d="M23.5 24V33" stroke="#E02020" stroke-width="1"/></svg>
</body></html>
